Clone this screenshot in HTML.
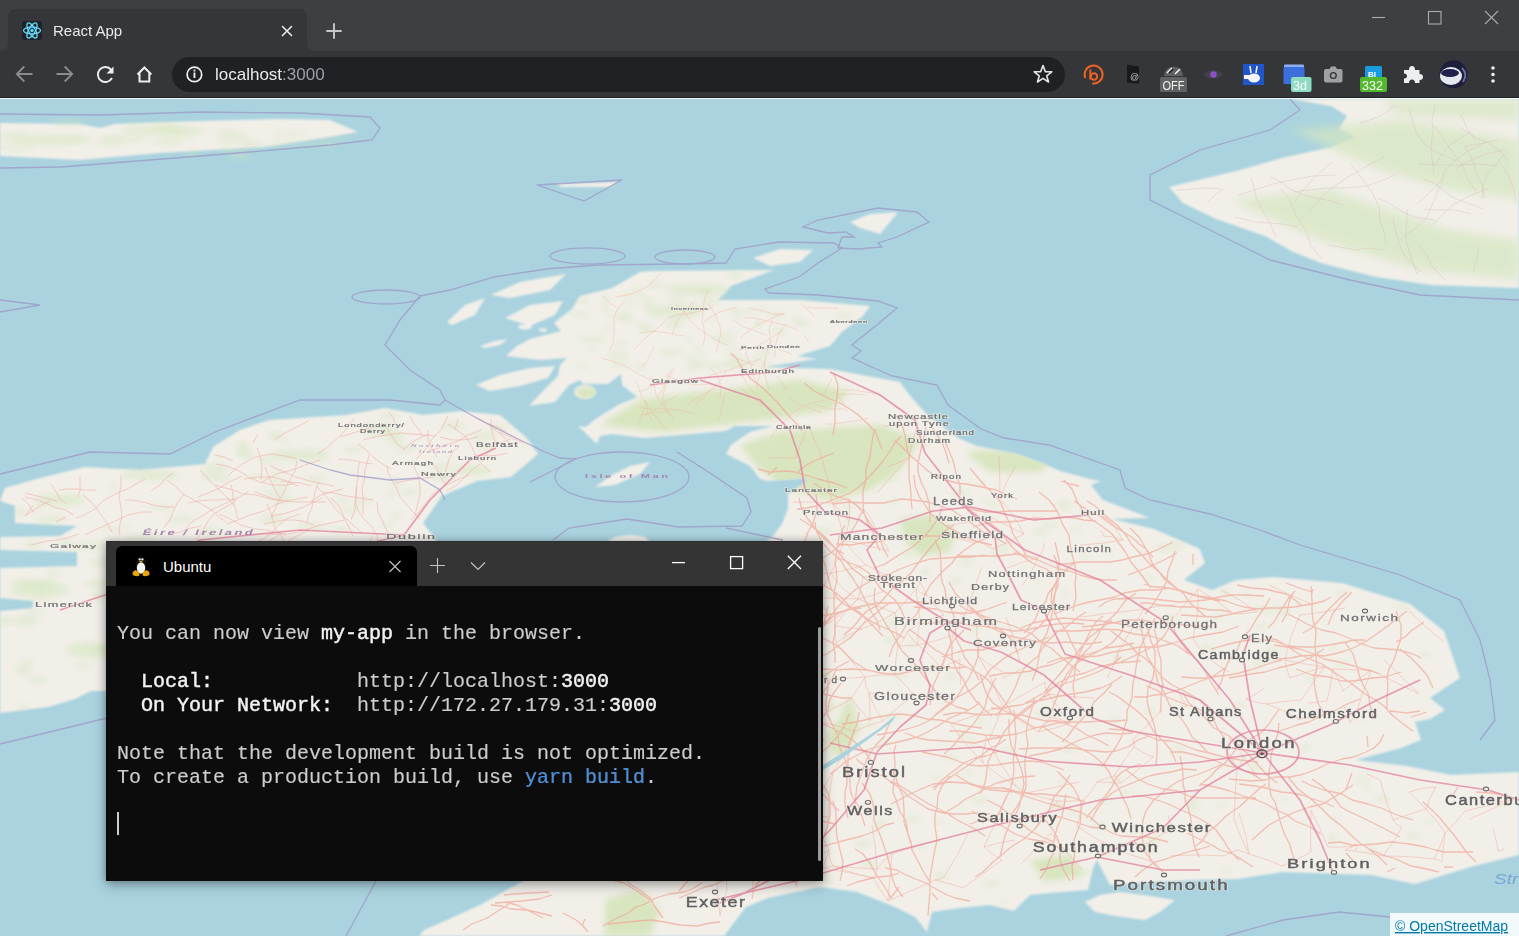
<!DOCTYPE html>
<html><head><meta charset="utf-8">
<style>
html,body{margin:0;padding:0;width:1519px;height:936px;overflow:hidden;background:#aad3df;font-family:"Liberation Sans",sans-serif;}
.abs{position:absolute;}
#frame{position:absolute;left:0;top:0;width:1519px;height:51px;background:#3c4043;}
#toolbar{position:absolute;left:0;top:51px;width:1519px;height:46px;background:#35363a;}
#tbline{position:absolute;left:0;top:97px;width:1519px;height:1px;background:#1e2021;}
#wline{position:absolute;left:0;top:98px;width:1519px;height:1px;background:#f4fbfd;}
#tab{position:absolute;left:8px;top:9px;width:299px;height:41px;background:#35363a;border-radius:8px 8px 0 0;}
#omni{position:absolute;left:172px;top:57px;width:893px;height:35px;background:#202124;border-radius:18px;}
#map{position:absolute;left:0;top:98px;width:1519px;height:838px;}
#term{position:absolute;left:106px;top:541px;width:717px;height:340px;background:#0c0c0c;box-shadow:0 0 8px rgba(0,0,0,.28),0 5px 12px rgba(0,0,0,.25);}
#ttitle{position:absolute;left:0;top:0;width:717px;height:45px;background:#343434;border-top:1px solid #2c2c2c;box-sizing:border-box;}
#ttab{position:absolute;left:10px;top:5px;width:301px;height:40px;background:#000;border-radius:6px 6px 0 0;}
.tl{position:absolute;left:11px;font:20px/24px "Liberation Mono",monospace;color:#cccccc;white-space:pre;-webkit-text-stroke:0.15px #cccccc;}
.b{font-weight:normal;color:#f2f2f2;-webkit-text-stroke:0.45px #f2f2f2;}
.lbl{font-family:"Liberation Sans",sans-serif;fill:#555;}
</style></head><body>

<div id="map">
<svg width="1519" height="838" viewBox="0 98 1519 838">
<defs>
<filter id="bl" x="-5%" y="-5%" width="110%" height="110%"><feGaussianBlur stdDeviation="1.1"/></filter>
<filter id="bl3" x="-10%" y="-10%" width="120%" height="120%"><feGaussianBlur stdDeviation="3"/></filter>
<filter id="bl5" x="-10%" y="-10%" width="120%" height="120%"><feGaussianBlur stdDeviation="5"/></filter>
<filter id="lblur" x="-5%" y="-20%" width="110%" height="140%"><feGaussianBlur stdDeviation="0.45"/></filter>
<clipPath id="landclip">

<path d="M0,123 L80,124 L100,128 L115,124 L200,121 L280,119 L330,120 L358,132 L330,137 L265,147 L160,153 L80,160 L0,156 Z"/>

<path d="M556,184 L618,182 L610,187 L562,187 Z"/>

<path d="M1290,99 L1519,99 L1519,288 L1431,285 L1376,277 L1321,263 L1293,252 L1265,236 L1216,219 L1183,203 L1169,187 L1240,170 L1282,158 L1331,147 L1356,137 L1339,129 L1347,116 L1331,106 Z"/>

<path d="M850,222 L870,214 L898,212 L890,222 L880,234 L860,228 Z"/>

<path d="M753,258 L780,249 L813,250 L800,262 L770,266 Z"/>

<path d="M491,295 L520,282 L566,274 L550,290 L510,298 Z"/>
<path d="M447,322 L465,305 L485,298 L475,315 L452,325 Z"/>
<path d="M505,318 L530,305 L563,301 L555,315 L530,326 Z"/>
<path d="M476,385 L500,375 L530,368 L555,366 L548,378 L520,386 L490,391 Z"/>
<ellipse cx="585" cy="392" rx="11" ry="7"/>
<path d="M595,487 L612,475 L630,466 L650,462 L640,474 L615,485 Z"/>

<path d="M1085,902 L1100,895 L1120,892 L1150,896 L1175,900 L1160,912 L1145,920 L1115,916 L1095,912 Z"/>

<path d="M606,542 L615,537 L630,535 L645,537 L650,542 Z"/>

<path d="M480,346 L495,341 L508,339 L500,345 L485,348 Z"/>
<ellipse cx="525" cy="327" rx="7" ry="2.6"/>
<ellipse cx="543" cy="330" rx="4" ry="1.8"/>

<path d="M640,272 L652,271 L774,270 L731,286 L718,300 L731,300 L800,300 L870,306 L863,316 L842,332 L830,346 L797,356 L817,359 L797,362 L764,367 L830,369 L900,382 L908,393 L918,405 L928,415 L946,429 L958,438 L977,446 L1017,454 L1044,464 L1060,471 L1090,479 L1101,481 L1091,485 L1103,500 L1150,518 L1112,519 L1154,529 L1200,549 L1205,563 L1184,580 L1212,590 L1236,580 L1273,577 L1342,583 L1410,604 L1444,631 L1458,672 L1460,678 L1430,698 L1445,710 L1430,719 L1415,722 L1421,740 L1401,748 L1356,760 L1407,766 L1451,775 L1519,772 L1519,855 L1474,866 L1415,884 L1371,875 L1283,872 L1238,879 L1195,880 L1150,882 L1110,885 L1100,866 L1097,860 L1093,868 L1088,890 L1050,893 L1030,895 L1014,911 L990,905 L960,908 L932,912 L927,932 L915,917 L895,907 L857,892 L820,887 L768,898 L746,907 L724,936 L419,936 L424,930 L447,920 L482,904 L503,892 L523,881 L520,700 L767,541 L773,536 L782,524 L788,508 L788,494 L806,482 L806,478 L767,481 L760,479 L750,466 L726,454 L731,445 L750,432 L773,426 L734,426 L726,431 L691,434 L645,438 L611,434 L600,436 L597,444 L578,426 L586,427 L594,420 L618,405 L637,397 L622,385 L621,374 L608,384 L583,384 L580,380 L569,385 L555,402 L529,406 L542,392 L558,376 L560,365 L567,358 L540,360 L506,356 L517,346 L530,339 L561,331 L554,323 L572,309 L580,296 L612,288 Z"/>

<path d="M5,488 L40,478 L85,467 L140,470 L205,464 L213,447 L240,430 L269,420 L346,415 L385,408 L423,415 L461,411 L500,415 L527,438 L538,454 L511,477 L477,481 L442,496 L423,523 L435,538 L440,560 L300,700 L107,691 L91,691 L75,699 L48,707 L0,713 L0,611 L33,608 L33,601 L0,598 L0,568 L77,566 L77,552 L0,550 L0,537 L60,536 L77,526 L15,523 L15,506 L0,501 Z"/>
</clipPath>
<filter id="rblur" x="0" y="0" width="100%" height="100%"><feGaussianBlur stdDeviation="0.5"/></filter>
</defs>
<rect x="0" y="98" width="1519" height="838" fill="#aad3df"/>
<g fill="#f2efe9" filter="url(#bl)">
<!-- Iceland -->
<path d="M0,123 L80,124 L100,128 L115,124 L200,121 L280,119 L330,120 L358,132 L330,137 L265,147 L160,153 L80,160 L0,156 Z"/>
<!-- Faroe -->
<path d="M556,184 L618,182 L610,187 L562,187 Z"/>
<!-- Norway -->
<path d="M1290,99 L1519,99 L1519,288 L1431,285 L1376,277 L1321,263 L1293,252 L1265,236 L1216,219 L1183,203 L1169,187 L1240,170 L1282,158 L1331,147 L1356,137 L1339,129 L1347,116 L1331,106 Z"/>
<!-- Shetland -->
<path d="M850,222 L870,214 L898,212 L890,222 L880,234 L860,228 Z"/>
<!-- Orkney -->
<path d="M753,258 L780,249 L813,250 L800,262 L770,266 Z"/>
<!-- Lewis, Uist, Skye, Mull, Arran, IoM -->
<path d="M491,295 L520,282 L566,274 L550,290 L510,298 Z"/>
<path d="M447,322 L465,305 L485,298 L475,315 L452,325 Z"/>
<path d="M505,318 L530,305 L563,301 L555,315 L530,326 Z"/>
<path d="M476,385 L500,375 L530,368 L555,366 L548,378 L520,386 L490,391 Z"/>
<ellipse cx="585" cy="392" rx="11" ry="7"/>
<path d="M595,487 L612,475 L630,466 L650,462 L640,474 L615,485 Z"/>
<!-- Isle of Wight -->
<path d="M1085,902 L1100,895 L1120,892 L1150,896 L1175,900 L1160,912 L1145,920 L1115,916 L1095,912 Z"/>
<!-- Anglesey -->
<path d="M606,542 L615,537 L630,535 L645,537 L650,542 Z"/>
<!-- Tiree etc -->
<path d="M480,346 L495,341 L508,339 L500,345 L485,348 Z"/>
<ellipse cx="525" cy="327" rx="7" ry="2.6"/>
<ellipse cx="543" cy="330" rx="4" ry="1.8"/>
<!-- Great Britain -->
<path d="M640,272 L652,271 L774,270 L731,286 L718,300 L731,300 L800,300 L870,306 L863,316 L842,332 L830,346 L797,356 L817,359 L797,362 L764,367 L830,369 L900,382 L908,393 L918,405 L928,415 L946,429 L958,438 L977,446 L1017,454 L1044,464 L1060,471 L1090,479 L1101,481 L1091,485 L1103,500 L1150,518 L1112,519 L1154,529 L1200,549 L1205,563 L1184,580 L1212,590 L1236,580 L1273,577 L1342,583 L1410,604 L1444,631 L1458,672 L1460,678 L1430,698 L1445,710 L1430,719 L1415,722 L1421,740 L1401,748 L1356,760 L1407,766 L1451,775 L1519,772 L1519,855 L1474,866 L1415,884 L1371,875 L1283,872 L1238,879 L1195,880 L1150,882 L1110,885 L1100,866 L1097,860 L1093,868 L1088,890 L1050,893 L1030,895 L1014,911 L990,905 L960,908 L932,912 L927,932 L915,917 L895,907 L857,892 L820,887 L768,898 L746,907 L724,936 L419,936 L424,930 L447,920 L482,904 L503,892 L523,881 L520,700 L767,541 L773,536 L782,524 L788,508 L788,494 L806,482 L806,478 L767,481 L760,479 L750,466 L726,454 L731,445 L750,432 L773,426 L734,426 L726,431 L691,434 L645,438 L611,434 L600,436 L597,444 L578,426 L586,427 L594,420 L618,405 L637,397 L622,385 L621,374 L608,384 L583,384 L580,380 L569,385 L555,402 L529,406 L542,392 L558,376 L560,365 L567,358 L540,360 L506,356 L517,346 L530,339 L561,331 L554,323 L572,309 L580,296 L612,288 Z"/>
<!-- Ireland -->
<path d="M5,488 L40,478 L85,467 L140,470 L205,464 L213,447 L240,430 L269,420 L346,415 L385,408 L423,415 L461,411 L500,415 L527,438 L538,454 L511,477 L477,481 L442,496 L423,523 L435,538 L440,560 L300,700 L107,691 L91,691 L75,699 L48,707 L0,713 L0,611 L33,608 L33,601 L0,598 L0,568 L77,566 L77,552 L0,550 L0,537 L60,536 L77,526 L15,523 L15,506 L0,501 Z"/>
</g>
<g clip-path="url(#landclip)"><g fill="#cfe2b0" opacity="0.75" filter="url(#bl3)">
<path d="M600,425 L640,400 L700,392 L760,385 L800,380 L850,392 L830,410 L780,418 L720,425 L660,432 Z" />
<path d="M740,445 L780,432 L830,428 L880,425 L920,440 L900,470 L870,490 L830,500 L790,490 L760,470 Z" />
<path d="M900,520 L930,515 L955,530 L950,552 L920,556 L905,540 Z" />
<path d="M965,452 L1010,450 L1050,462 L1040,472 L990,472 Z" />
<path d="M605,900 L640,890 L660,910 L650,936 L605,936 Z" />
<path d="M1030,860 L1070,855 L1085,875 L1045,882 Z" />
<path d="M825,740 L850,700 L860,730 L840,760 Z" />
<path d="M575,388 L596,386 L598,398 L578,399 Z" />
</g></g>
<g fill="#d4e6bf" opacity="0.7" filter="url(#bl5)">
<path d="M1290,130 L1400,120 L1519,140 L1519,200 L1450,190 L1380,170 Z" />
<path d="M1230,200 L1330,190 L1450,230 L1519,240 L1519,280 L1420,270 L1320,240 Z" />
<path d="M1380,100 L1519,100 L1519,120 L1400,115 Z" />
</g>
<g fill="#d3e5bd" opacity="0.55" filter="url(#bl3)">
<ellipse cx="671" cy="287" rx="9" ry="1.6"/>
<ellipse cx="733" cy="309" rx="4" ry="2.3"/>
<ellipse cx="586" cy="315" rx="5" ry="1.6"/>
<ellipse cx="700" cy="355" rx="5" ry="1.8"/>
<ellipse cx="745" cy="312" rx="12" ry="1.6"/>
<ellipse cx="666" cy="354" rx="5" ry="2.4"/>
<ellipse cx="763" cy="309" rx="8" ry="1.6"/>
<ellipse cx="776" cy="315" rx="7" ry="2.4"/>
<ellipse cx="709" cy="302" rx="10" ry="2.5"/>
<ellipse cx="647" cy="329" rx="8" ry="2.8"/>
<ellipse cx="698" cy="348" rx="5" ry="2.2"/>
<ellipse cx="587" cy="339" rx="10" ry="2.4"/>
<ellipse cx="780" cy="331" rx="9" ry="2.2"/>
<ellipse cx="715" cy="338" rx="4" ry="2.6"/>
<ellipse cx="766" cy="371" rx="11" ry="1.9"/>
<ellipse cx="689" cy="339" rx="4" ry="2.2"/>
<ellipse cx="592" cy="349" rx="5" ry="1.9"/>
<ellipse cx="690" cy="359" rx="5" ry="2.2"/>
<ellipse cx="737" cy="360" rx="11" ry="2.8"/>
<ellipse cx="657" cy="314" rx="7" ry="2.8"/>
<ellipse cx="627" cy="295" rx="6" ry="2.2"/>
<ellipse cx="576" cy="314" rx="7" ry="2.3"/>
<ellipse cx="727" cy="334" rx="9" ry="1.6"/>
<ellipse cx="691" cy="312" rx="5" ry="2.5"/>
<ellipse cx="637" cy="288" rx="7" ry="1.6"/>
<ellipse cx="605" cy="308" rx="4" ry="2.8"/>
<ellipse cx="649" cy="307" rx="7" ry="1.7"/>
<ellipse cx="712" cy="320" rx="5" ry="1.7"/>
<ellipse cx="676" cy="298" rx="11" ry="1.7"/>
<ellipse cx="582" cy="367" rx="8" ry="1.7"/>
<ellipse cx="735" cy="275" rx="8" ry="3.0"/>
<ellipse cx="652" cy="309" rx="5" ry="2.7"/>
<ellipse cx="732" cy="350" rx="7" ry="1.8"/>
<ellipse cx="642" cy="324" rx="7" ry="1.5"/>
<ellipse cx="583" cy="300" rx="6" ry="2.5"/>
<ellipse cx="640" cy="295" rx="6" ry="1.8"/>
<ellipse cx="759" cy="362" rx="11" ry="2.2"/>
<ellipse cx="768" cy="352" rx="5" ry="2.5"/>
<ellipse cx="796" cy="320" rx="5" ry="2.7"/>
<ellipse cx="673" cy="352" rx="12" ry="2.1"/>
<ellipse cx="693" cy="367" rx="10" ry="1.8"/>
<ellipse cx="618" cy="355" rx="12" ry="2.5"/>
<ellipse cx="678" cy="327" rx="5" ry="1.5"/>
<ellipse cx="730" cy="365" rx="7" ry="2.8"/>
<ellipse cx="649" cy="301" rx="6" ry="2.4"/>
<ellipse cx="652" cy="314" rx="5" ry="2.9"/>
<ellipse cx="679" cy="318" rx="9" ry="2.9"/>
<ellipse cx="699" cy="364" rx="8" ry="2.3"/>
<ellipse cx="705" cy="290" rx="4" ry="2.7"/>
<ellipse cx="626" cy="319" rx="10" ry="2.3"/>
<ellipse cx="671" cy="324" rx="8" ry="2.7"/>
<ellipse cx="606" cy="328" rx="6" ry="1.9"/>
<ellipse cx="803" cy="323" rx="8" ry="2.6"/>
<ellipse cx="844" cy="316" rx="9" ry="2.3"/>
<ellipse cx="726" cy="341" rx="8" ry="2.3"/>
<ellipse cx="716" cy="366" rx="10" ry="2.8"/>
<ellipse cx="740" cy="366" rx="11" ry="1.7"/>
<ellipse cx="611" cy="316" rx="5" ry="1.9"/>
<ellipse cx="597" cy="339" rx="10" ry="2.8"/>
<ellipse cx="621" cy="344" rx="9" ry="1.7"/>
<ellipse cx="640" cy="367" rx="7" ry="2.2"/>
<ellipse cx="623" cy="315" rx="8" ry="2.0"/>
<ellipse cx="633" cy="304" rx="10" ry="1.5"/>
<ellipse cx="738" cy="316" rx="4" ry="2.0"/>
<ellipse cx="759" cy="323" rx="5" ry="3.0"/>
<ellipse cx="606" cy="299" rx="4" ry="2.7"/>
<ellipse cx="655" cy="285" rx="7" ry="2.9"/>
<ellipse cx="619" cy="364" rx="9" ry="2.6"/>
<ellipse cx="778" cy="315" rx="5" ry="2.9"/>
<ellipse cx="762" cy="352" rx="5" ry="2.8"/>
<ellipse cx="245" cy="454" rx="10" ry="3.4"/>
<ellipse cx="285" cy="441" rx="5" ry="1.8"/>
<ellipse cx="410" cy="448" rx="9" ry="1.9"/>
<ellipse cx="396" cy="482" rx="6" ry="2.4"/>
<ellipse cx="442" cy="467" rx="9" ry="3.2"/>
<ellipse cx="212" cy="476" rx="11" ry="3.5"/>
<ellipse cx="185" cy="519" rx="11" ry="2.8"/>
<ellipse cx="219" cy="456" rx="5" ry="1.8"/>
<ellipse cx="38" cy="507" rx="7" ry="1.8"/>
<ellipse cx="46" cy="520" rx="13" ry="2.8"/>
<ellipse cx="142" cy="536" rx="14" ry="2.6"/>
<ellipse cx="132" cy="537" rx="7" ry="2.2"/>
<ellipse cx="256" cy="476" rx="6" ry="2.5"/>
<ellipse cx="316" cy="479" rx="12" ry="2.8"/>
<ellipse cx="387" cy="525" rx="8" ry="2.2"/>
<ellipse cx="391" cy="494" rx="4" ry="3.2"/>
<ellipse cx="396" cy="516" rx="5" ry="2.5"/>
<ellipse cx="272" cy="519" rx="12" ry="3.2"/>
<ellipse cx="315" cy="527" rx="11" ry="2.9"/>
<ellipse cx="57" cy="519" rx="10" ry="2.8"/>
<ellipse cx="338" cy="499" rx="9" ry="1.5"/>
<ellipse cx="272" cy="480" rx="11" ry="1.6"/>
<ellipse cx="398" cy="443" rx="5" ry="2.0"/>
<ellipse cx="394" cy="437" rx="11" ry="3.5"/>
<ellipse cx="267" cy="460" rx="9" ry="2.9"/>
<ellipse cx="414" cy="491" rx="10" ry="1.7"/>
<ellipse cx="401" cy="450" rx="10" ry="1.5"/>
<ellipse cx="363" cy="501" rx="11" ry="2.1"/>
<ellipse cx="279" cy="471" rx="9" ry="1.7"/>
<ellipse cx="483" cy="436" rx="14" ry="3.4"/>
<ellipse cx="243" cy="445" rx="6" ry="3.4"/>
<ellipse cx="114" cy="486" rx="5" ry="2.5"/>
<ellipse cx="443" cy="477" rx="13" ry="2.9"/>
<ellipse cx="125" cy="528" rx="9" ry="1.5"/>
<ellipse cx="243" cy="450" rx="5" ry="2.2"/>
<ellipse cx="171" cy="520" rx="4" ry="3.0"/>
<ellipse cx="453" cy="426" rx="13" ry="2.9"/>
<ellipse cx="487" cy="448" rx="8" ry="2.3"/>
<ellipse cx="55" cy="519" rx="7" ry="3.4"/>
<ellipse cx="276" cy="435" rx="8" ry="3.4"/>
<ellipse cx="341" cy="530" rx="13" ry="2.6"/>
<ellipse cx="389" cy="416" rx="11" ry="2.4"/>
<ellipse cx="406" cy="494" rx="7" ry="1.6"/>
<ellipse cx="500" cy="427" rx="9" ry="2.2"/>
<ellipse cx="161" cy="507" rx="14" ry="2.0"/>
<ellipse cx="354" cy="449" rx="10" ry="2.3"/>
<ellipse cx="112" cy="529" rx="9" ry="1.9"/>
<ellipse cx="308" cy="526" rx="11" ry="2.3"/>
<ellipse cx="223" cy="479" rx="8" ry="2.2"/>
<ellipse cx="272" cy="492" rx="13" ry="1.9"/>
<ellipse cx="216" cy="468" rx="14" ry="3.2"/>
<ellipse cx="484" cy="472" rx="10" ry="1.5"/>
<ellipse cx="211" cy="531" rx="12" ry="3.2"/>
<ellipse cx="525" cy="443" rx="5" ry="1.8"/>
<ellipse cx="282" cy="499" rx="13" ry="2.9"/>
<ellipse cx="350" cy="510" rx="9" ry="2.6"/>
<ellipse cx="21" cy="512" rx="6" ry="3.3"/>
<ellipse cx="349" cy="450" rx="5" ry="2.0"/>
<ellipse cx="344" cy="502" rx="5" ry="1.6"/>
<ellipse cx="283" cy="486" rx="8" ry="1.9"/>
<ellipse cx="64" cy="543" rx="8" ry="2.9"/>
<ellipse cx="102" cy="650" rx="13" ry="3.0"/>
<ellipse cx="25" cy="583" rx="14" ry="3.4"/>
<ellipse cx="33" cy="545" rx="9" ry="3.3"/>
<ellipse cx="45" cy="584" rx="11" ry="3.9"/>
<ellipse cx="36" cy="612" rx="11" ry="2.4"/>
<ellipse cx="84" cy="666" rx="10" ry="2.4"/>
<ellipse cx="103" cy="594" rx="12" ry="2.5"/>
<ellipse cx="23" cy="670" rx="8" ry="3.9"/>
<ellipse cx="53" cy="573" rx="7" ry="2.8"/>
<ellipse cx="23" cy="706" rx="6" ry="2.1"/>
<ellipse cx="99" cy="597" rx="7" ry="3.9"/>
<ellipse cx="79" cy="546" rx="11" ry="2.8"/>
<ellipse cx="40" cy="597" rx="7" ry="2.0"/>
<ellipse cx="101" cy="562" rx="14" ry="2.4"/>
<ellipse cx="38" cy="680" rx="12" ry="2.9"/>
<ellipse cx="5" cy="621" rx="8" ry="3.8"/>
<ellipse cx="95" cy="546" rx="9" ry="3.6"/>
<ellipse cx="81" cy="548" rx="5" ry="2.1"/>
<ellipse cx="98" cy="584" rx="12" ry="3.8"/>
<ellipse cx="36" cy="587" rx="14" ry="3.2"/>
<ellipse cx="28" cy="662" rx="8" ry="2.6"/>
<ellipse cx="97" cy="648" rx="13" ry="2.0"/>
<ellipse cx="25" cy="621" rx="14" ry="3.9"/>
<ellipse cx="41" cy="583" rx="9" ry="3.0"/>
<ellipse cx="1382" cy="799" rx="8" ry="2.7"/>
<ellipse cx="1246" cy="594" rx="5" ry="2.0"/>
<ellipse cx="960" cy="806" rx="4" ry="1.6"/>
<ellipse cx="847" cy="706" rx="5" ry="3.0"/>
<ellipse cx="1007" cy="472" rx="4" ry="2.2"/>
<ellipse cx="1317" cy="653" rx="4" ry="2.1"/>
<ellipse cx="1255" cy="767" rx="7" ry="2.8"/>
<ellipse cx="1218" cy="616" rx="7" ry="1.8"/>
<ellipse cx="995" cy="553" rx="4" ry="2.8"/>
<ellipse cx="1225" cy="593" rx="5" ry="3.0"/>
<ellipse cx="1176" cy="546" rx="8" ry="2.5"/>
<ellipse cx="1153" cy="840" rx="8" ry="2.9"/>
<ellipse cx="851" cy="577" rx="4" ry="1.8"/>
<ellipse cx="1426" cy="655" rx="5" ry="2.7"/>
<ellipse cx="1238" cy="740" rx="4" ry="2.1"/>
<ellipse cx="921" cy="532" rx="5" ry="2.4"/>
<ellipse cx="831" cy="594" rx="7" ry="1.8"/>
<ellipse cx="1040" cy="532" rx="8" ry="2.3"/>
<ellipse cx="867" cy="481" rx="5" ry="2.3"/>
<ellipse cx="937" cy="778" rx="5" ry="1.9"/>
<ellipse cx="1040" cy="713" rx="5" ry="2.1"/>
<ellipse cx="1076" cy="529" rx="7" ry="1.8"/>
<ellipse cx="827" cy="881" rx="6" ry="2.7"/>
<ellipse cx="833" cy="706" rx="7" ry="2.9"/>
<ellipse cx="885" cy="741" rx="5" ry="2.3"/>
<ellipse cx="925" cy="572" rx="6" ry="2.9"/>
<ellipse cx="899" cy="675" rx="8" ry="3.0"/>
<ellipse cx="960" cy="493" rx="9" ry="3.0"/>
<ellipse cx="1105" cy="853" rx="8" ry="1.8"/>
<ellipse cx="975" cy="630" rx="6" ry="2.1"/>
<ellipse cx="909" cy="554" rx="7" ry="2.8"/>
<ellipse cx="852" cy="711" rx="8" ry="1.6"/>
<ellipse cx="1240" cy="705" rx="7" ry="2.0"/>
<ellipse cx="1115" cy="721" rx="6" ry="2.5"/>
<ellipse cx="1134" cy="649" rx="3" ry="2.4"/>
<ellipse cx="1164" cy="548" rx="8" ry="2.7"/>
<ellipse cx="912" cy="645" rx="4" ry="2.2"/>
<ellipse cx="1334" cy="819" rx="6" ry="1.6"/>
<ellipse cx="1174" cy="619" rx="9" ry="1.7"/>
<ellipse cx="1333" cy="837" rx="4" ry="3.0"/>
<ellipse cx="869" cy="605" rx="8" ry="1.7"/>
<ellipse cx="968" cy="561" rx="6" ry="2.0"/>
<ellipse cx="849" cy="521" rx="4" ry="2.9"/>
<ellipse cx="940" cy="822" rx="4" ry="2.3"/>
<ellipse cx="1266" cy="610" rx="8" ry="2.3"/>
<ellipse cx="1227" cy="871" rx="4" ry="3.0"/>
<ellipse cx="1261" cy="627" rx="8" ry="1.9"/>
<ellipse cx="1074" cy="812" rx="6" ry="1.8"/>
<ellipse cx="1231" cy="762" rx="5" ry="1.5"/>
<ellipse cx="847" cy="505" rx="7" ry="2.1"/>
<ellipse cx="915" cy="544" rx="7" ry="1.5"/>
<ellipse cx="825" cy="607" rx="4" ry="2.0"/>
<ellipse cx="979" cy="722" rx="7" ry="1.8"/>
<ellipse cx="1257" cy="667" rx="4" ry="2.9"/>
<ellipse cx="993" cy="505" rx="4" ry="2.5"/>
<ellipse cx="1429" cy="821" rx="5" ry="1.9"/>
<ellipse cx="831" cy="752" rx="6" ry="2.0"/>
<ellipse cx="1272" cy="652" rx="9" ry="2.6"/>
<ellipse cx="996" cy="882" rx="3" ry="2.3"/>
<ellipse cx="1106" cy="549" rx="3" ry="2.7"/>
<ellipse cx="832" cy="705" rx="9" ry="1.7"/>
<ellipse cx="962" cy="734" rx="6" ry="2.5"/>
<ellipse cx="1038" cy="580" rx="3" ry="2.8"/>
<ellipse cx="1368" cy="788" rx="3" ry="2.8"/>
<ellipse cx="1342" cy="663" rx="7" ry="2.2"/>
<ellipse cx="980" cy="483" rx="4" ry="1.6"/>
<ellipse cx="1057" cy="805" rx="7" ry="2.8"/>
<ellipse cx="1208" cy="648" rx="8" ry="2.3"/>
<ellipse cx="1008" cy="751" rx="9" ry="1.8"/>
<ellipse cx="1004" cy="548" rx="7" ry="2.9"/>
<ellipse cx="1342" cy="593" rx="8" ry="2.0"/>
<ellipse cx="989" cy="884" rx="7" ry="2.5"/>
<ellipse cx="1150" cy="850" rx="7" ry="2.8"/>
<ellipse cx="1127" cy="792" rx="6" ry="2.0"/>
<ellipse cx="971" cy="741" rx="3" ry="2.9"/>
<ellipse cx="924" cy="443" rx="4" ry="2.9"/>
<ellipse cx="1063" cy="501" rx="3" ry="1.6"/>
<ellipse cx="1305" cy="747" rx="7" ry="2.6"/>
<ellipse cx="869" cy="725" rx="5" ry="2.7"/>
<ellipse cx="869" cy="864" rx="8" ry="2.9"/>
<ellipse cx="898" cy="533" rx="4" ry="1.6"/>
<ellipse cx="1413" cy="836" rx="7" ry="2.7"/>
<ellipse cx="893" cy="479" rx="8" ry="1.8"/>
<ellipse cx="1045" cy="642" rx="3" ry="1.9"/>
<ellipse cx="1020" cy="788" rx="5" ry="2.0"/>
<ellipse cx="845" cy="636" rx="6" ry="2.7"/>
<ellipse cx="1064" cy="782" rx="6" ry="1.8"/>
<ellipse cx="824" cy="531" rx="8" ry="3.0"/>
<ellipse cx="826" cy="675" rx="6" ry="2.7"/>
<ellipse cx="951" cy="677" rx="5" ry="2.7"/>
<ellipse cx="1004" cy="902" rx="5" ry="1.8"/>
<ellipse cx="1310" cy="679" rx="4" ry="2.5"/>
<ellipse cx="879" cy="824" rx="7" ry="2.7"/>
<ellipse cx="1260" cy="608" rx="5" ry="2.1"/>
<ellipse cx="966" cy="562" rx="8" ry="2.3"/>
<ellipse cx="1087" cy="872" rx="4" ry="2.2"/>
<ellipse cx="1193" cy="807" rx="8" ry="2.5"/>
<ellipse cx="1066" cy="593" rx="4" ry="2.8"/>
<ellipse cx="1284" cy="801" rx="4" ry="2.2"/>
<ellipse cx="1361" cy="720" rx="4" ry="2.2"/>
<ellipse cx="956" cy="581" rx="7" ry="2.8"/>
<ellipse cx="931" cy="508" rx="4" ry="2.0"/>
<ellipse cx="1051" cy="525" rx="9" ry="2.6"/>
<ellipse cx="894" cy="622" rx="9" ry="2.7"/>
<ellipse cx="1333" cy="647" rx="4" ry="2.5"/>
<ellipse cx="897" cy="533" rx="5" ry="1.6"/>
<ellipse cx="1101" cy="826" rx="7" ry="2.3"/>
<ellipse cx="1263" cy="662" rx="4" ry="2.4"/>
<ellipse cx="1105" cy="800" rx="8" ry="2.1"/>
<ellipse cx="1222" cy="805" rx="6" ry="1.8"/>
<ellipse cx="1362" cy="780" rx="8" ry="2.5"/>
<ellipse cx="1270" cy="657" rx="5" ry="2.4"/>
<ellipse cx="891" cy="640" rx="8" ry="2.6"/>
<ellipse cx="1118" cy="658" rx="7" ry="2.1"/>
<ellipse cx="950" cy="757" rx="8" ry="2.1"/>
<ellipse cx="850" cy="702" rx="4" ry="2.7"/>
<ellipse cx="893" cy="717" rx="6" ry="2.6"/>
<ellipse cx="1179" cy="750" rx="8" ry="2.3"/>
<ellipse cx="969" cy="772" rx="5" ry="2.6"/>
<ellipse cx="1014" cy="630" rx="3" ry="2.1"/>
<ellipse cx="1116" cy="779" rx="5" ry="1.9"/>
<ellipse cx="979" cy="801" rx="9" ry="2.3"/>
<ellipse cx="975" cy="831" rx="5" ry="1.8"/>
<ellipse cx="913" cy="818" rx="8" ry="2.5"/>
<ellipse cx="1150" cy="711" rx="4" ry="2.9"/>
<ellipse cx="1069" cy="749" rx="8" ry="2.7"/>
<ellipse cx="1149" cy="577" rx="6" ry="1.7"/>
<ellipse cx="1403" cy="607" rx="8" ry="1.9"/>
<ellipse cx="1085" cy="557" rx="6" ry="1.8"/>
<ellipse cx="825" cy="791" rx="5" ry="1.9"/>
<ellipse cx="1033" cy="670" rx="6" ry="2.5"/>
<ellipse cx="1282" cy="611" rx="9" ry="2.8"/>
<ellipse cx="863" cy="844" rx="8" ry="2.7"/>
<ellipse cx="921" cy="846" rx="7" ry="1.5"/>
<ellipse cx="894" cy="501" rx="4" ry="2.7"/>
<ellipse cx="1064" cy="506" rx="8" ry="2.7"/>
<ellipse cx="940" cy="876" rx="7" ry="2.7"/>
<ellipse cx="1371" cy="849" rx="4" ry="2.5"/>
<ellipse cx="1192" cy="801" rx="6" ry="2.8"/>
<ellipse cx="986" cy="500" rx="6" ry="1.6"/>
<ellipse cx="166" cy="127" rx="13" ry="1.7"/>
<ellipse cx="191" cy="153" rx="6" ry="2.3"/>
<ellipse cx="166" cy="142" rx="15" ry="2.3"/>
<ellipse cx="134" cy="137" rx="19" ry="1.1"/>
<ellipse cx="225" cy="145" rx="6" ry="1.9"/>
<ellipse cx="240" cy="156" rx="11" ry="2.5"/>
<ellipse cx="181" cy="139" rx="19" ry="1.1"/>
<ellipse cx="253" cy="145" rx="11" ry="2.3"/>
<ellipse cx="131" cy="139" rx="13" ry="2.2"/>
<ellipse cx="78" cy="138" rx="12" ry="1.8"/>
<ellipse cx="290" cy="133" rx="18" ry="1.6"/>
<ellipse cx="179" cy="132" rx="13" ry="2.5"/>
<ellipse cx="231" cy="151" rx="11" ry="1.5"/>
<ellipse cx="108" cy="143" rx="15" ry="2.2"/>
<ellipse cx="19" cy="148" rx="18" ry="1.8"/>
<ellipse cx="22" cy="133" rx="6" ry="1.3"/>
<ellipse cx="323" cy="144" rx="15" ry="2.2"/>
<ellipse cx="319" cy="144" rx="15" ry="1.9"/>
<ellipse cx="245" cy="143" rx="16" ry="1.3"/>
<ellipse cx="235" cy="138" rx="17" ry="1.2"/>
<ellipse cx="68" cy="123" rx="17" ry="2.4"/>
<ellipse cx="231" cy="135" rx="18" ry="2.2"/>
<ellipse cx="199" cy="131" rx="10" ry="1.6"/>
<ellipse cx="115" cy="138" rx="15" ry="2.4"/>
<ellipse cx="24" cy="142" rx="7" ry="1.2"/>
<ellipse cx="285" cy="143" rx="19" ry="1.7"/>
<ellipse cx="10" cy="136" rx="14" ry="2.4"/>
<ellipse cx="343" cy="139" rx="12" ry="1.2"/>
<ellipse cx="227" cy="130" rx="8" ry="1.0"/>
<ellipse cx="7" cy="147" rx="8" ry="2.4"/>
</g>
<g fill="#d6e7c2" opacity="0.6" filter="url(#bl3)">
<ellipse cx="60" cy="500" rx="25" ry="6"/>
<ellipse cx="150" cy="475" rx="30" ry="5"/>
<ellipse cx="40" cy="590" rx="30" ry="8"/>
<ellipse cx="90" cy="650" rx="25" ry="8"/>
<ellipse cx="300" cy="455" rx="30" ry="6"/>
<ellipse cx="380" cy="430" rx="20" ry="5"/>
<ellipse cx="470" cy="470" rx="18" ry="5"/>
<ellipse cx="700" cy="290" rx="30" ry="6"/>
<ellipse cx="680" cy="310" rx="25" ry="6"/>
<ellipse cx="50" cy="140" rx="40" ry="5"/>
<ellipse cx="160" cy="130" rx="40" ry="5"/>
</g>
<g filter="url(#rblur)">
<path d="M772,869 L783,876 L796,883 M1312,779 L1322,786 L1332,795 L1341,807 L1348,811 L1363,818 L1375,824 L1385,829 L1400,837 M1384,734 L1380,742 L1374,748 L1366,752 L1354,757 L1342,759 L1327,764 L1317,769 L1304,774 L1290,777 L1275,777 L1265,780 L1251,781 L1241,780 L1229,779 M1070,775 L1064,786 L1054,797 L1049,810 L1041,821 L1035,829 L1024,839 L1011,847 L1004,853 L993,862 L983,872 L975,877 M1197,770 L1183,769 L1171,772 L1158,774 L1149,776 L1137,781 L1122,787 L1112,793 L1104,800 L1096,811 L1091,821 M994,822 L1001,809 L1004,802 L1010,790 L1013,779 L1014,768 L1013,761 L1015,748 L1016,737 L1015,724 L1014,710 M1328,843 L1340,842 L1352,845 L1360,845 L1376,844 L1392,842 L1409,844 L1426,847 L1435,850 L1445,852 L1463,852 L1473,852 M1396,611 L1401,625 L1401,632 L1401,639 L1398,647 L1394,660 L1389,669 L1387,678 L1388,686 L1387,698 L1387,710 M1086,612 L1078,617 L1071,623 L1065,628 L1057,632 L1046,643 L1038,656 L1026,666 L1020,675 L1015,688 L1009,699 L1004,707 L996,716 M882,449 L879,442 L876,433 L868,424 L857,414 L850,409 L840,403 L828,398 L814,391 L804,383 M1054,555 L1057,563 L1058,571 L1057,580 L1054,586 L1048,594 L1046,601 L1039,610 L1035,620 L1029,627 L1024,633 M848,818 L845,805 L845,792 L847,784 L847,772 L848,764 L848,757 L849,746 L853,733 L857,724 L859,712 M1035,814 L1046,821 L1051,827 L1057,837 L1060,846 L1060,860 L1063,869 L1070,881 M1411,717 L1427,712 M1134,697 L1145,697 L1155,695 L1164,694 L1178,690 L1186,687 L1198,682 L1212,677 L1225,668 M801,675 L791,676 L778,676 L767,678 L754,678 L737,680 L723,685 L710,688 L701,690 L692,689 L680,690 L665,688 M1390,711 L1407,713 L1420,711 M904,638 L896,633 L887,629 L878,625 L867,619 L859,612 L844,604 L838,599 L831,588 L828,577 L825,564 L821,557 L816,552 M894,440 L901,446 L912,457 L919,463 L928,471 L936,476 L946,480 L957,483 L966,484 L982,487 L996,490 L1005,494 L1017,499 M1149,736 L1138,740 L1128,747 L1116,751 L1106,752 L1095,751 L1084,750 L1074,748 L1065,748 L1051,748 L1036,748 L1019,749 M990,814 L975,813 L965,814 L954,814 L944,813 L928,809 L919,803 L908,796 L900,788 L890,782 M823,859 L821,869 L820,881 M1155,618 L1151,627 L1144,639 L1140,648 L1137,661 L1135,675 L1133,683 L1132,698 L1127,711 L1127,720 L1124,729 L1121,738 L1116,747 L1108,758 L1102,767 M733,769 L720,771 L709,775 L697,780 L681,786 L668,788 L654,790 L643,789 M1134,841 L1139,847 L1146,853 L1152,861 L1163,872 M1217,690 L1221,683 L1224,672 L1228,662 L1236,653 L1240,643 L1245,635 L1250,630 L1257,618 L1265,607 L1270,598 M1153,557 L1146,549 L1139,544 L1133,538 L1125,533 L1112,525 L1100,516 L1092,513 L1083,507 L1074,501 M839,558 L850,563 L858,566 L869,573 L876,582 L881,589 L894,599 L900,607 L905,619 M949,731 L958,731 L973,733 L985,735 L1000,736 L1017,734 L1026,731 L1034,728 L1046,726 L1057,723 L1068,722 L1086,722 L1103,721 L1116,721 L1127,720 M1057,564 L1066,564 L1080,562 L1094,562 L1110,562 L1122,560 L1133,557 L1147,554 L1159,549 L1173,542 M1138,629 L1129,626 L1116,623 L1100,621 L1085,620 L1074,619 L1064,618 L1048,620 L1033,623 L1021,628 M996,678 L992,685 L987,697 L985,707 L979,716 L972,726 L960,737 L954,745 L944,754 M1276,659 L1291,658 L1300,656 L1316,655 L1324,656 L1334,654 L1345,651 L1353,648 L1365,642 L1378,633 L1389,625 L1398,618 L1407,611 M735,861 L727,851 L718,845 L710,838 L704,829 L698,815 L695,807 L693,798 M979,680 L973,668 L965,658 L960,646 L956,639 L955,625 L954,617 L950,605 L946,597 L945,589 L942,582 L941,574 L941,563 L940,551 L935,540 M809,751 L808,743 L807,734 L809,723 L812,715 L817,704 L823,692 L828,686 L833,677 L836,670 M930,522 L930,514 L929,503 L926,492 L921,482 L918,472 L918,463 L920,454 L923,440 L926,427 M775,568 L768,562 L763,557 M1205,616 L1197,609 L1189,602 L1184,594 L1174,586 L1163,576 L1153,565 L1149,555 L1145,547 L1139,537 L1130,528 M733,647 L743,657 L750,669 L756,677 L761,687 L766,695 L773,705 L778,719 L783,727 L790,736 L796,743 L805,749 L819,758 M1444,867 L1453,867 M943,715 L953,713 L966,713 L983,715 L999,714 L1008,714 L1022,715 L1033,718 L1046,721 L1057,721 L1066,724 L1076,728 L1087,735 L1100,741 L1109,746 M1075,699 L1073,687 L1074,680 L1075,669 L1079,655 L1085,642 L1090,632 L1096,622 L1103,616 M1006,739 L999,744 L991,748 L979,757 L967,766 L954,775 L941,784 L932,787 M1311,596 L1313,589 M1476,792 L1490,793 L1499,794 L1513,800 M1066,852 L1056,846 L1046,842 L1029,839 L1015,834 L1004,827 L988,820 L979,815 L972,811 M1208,753 L1199,743 L1192,737 L1187,727 L1180,717 L1174,711 L1169,704 L1164,692 L1158,683 L1156,674 L1152,664 L1147,656 L1144,644 L1142,632 L1138,623 M992,716 L986,711 L976,701 L968,690 L963,679 L957,671 L952,658 L952,646 L949,634 L949,623 M1220,601 L1205,598 L1189,594 L1177,589 L1165,580 L1160,573 L1149,563 L1142,555 L1132,545 L1126,535 L1117,525 L1107,517 L1095,506 L1087,501 M949,602 L932,603 L920,602 L903,603 L887,603 L877,603 L868,605 L852,608 L839,613 L831,618 L825,624 L821,631 L814,640 L808,645 M922,752 L931,754 L947,757 L958,761 L969,765 L981,766 L996,765 L1009,763 L1020,762 L1028,761 L1042,762 L1050,765 L1064,770 M970,468 L979,479 L986,487 L996,496 L1001,503 L1005,514 L1010,524 L1013,534 L1020,545 L1026,555 M1279,709 L1275,715 L1268,725 L1261,733 L1252,738 L1244,742 L1237,747 L1231,756 L1225,763 L1216,770 L1211,776 L1199,786 M833,435 L835,422 L835,408 L837,398 L838,385 L834,374 M987,538 L975,543 L966,549 L957,556 L952,563 L942,572 L931,584 L925,594 L921,607 L916,615 L906,625 L901,634 L893,646 L889,657 M1189,654 L1178,646 L1163,640 L1151,636 L1134,634 L1119,630 L1101,629 L1090,630 L1078,631 L1065,631 L1053,631 M1226,763 L1218,766 L1204,772 L1196,775 L1186,778 L1177,782 L1164,791 L1153,801 L1146,811 L1143,820 L1142,832 L1143,845 L1145,852 M990,676 L1006,673 L1016,673 L1031,671 L1041,667 L1051,665 L1066,659 L1076,657 L1085,655 L1095,652 L1106,648 L1122,646 L1134,643 M1142,618 L1148,630 L1151,641 L1155,651 L1155,664 L1153,678 L1148,689 L1147,701 L1150,713 L1154,724 L1156,734 L1157,744 L1157,754 L1156,765 M980,702 L974,707 L965,712 L950,718 L938,726 L924,734 L914,738 L898,742 L884,745 L867,750 L854,757 L845,762 L837,769 L830,774 M1476,862 L1468,854 L1462,846 L1454,835 L1447,827 L1440,818 L1431,809 L1423,802 M1257,609 L1244,607 L1234,604 L1226,601 L1212,598 L1199,596 L1189,593 L1177,590 L1164,587 L1154,587 L1144,584 M1288,614 L1298,619 L1307,624 L1322,630 L1336,633 L1351,639 L1359,643 L1374,648 L1387,649 L1399,650 L1413,654 L1421,658 M1274,645 L1287,647 L1300,649 L1314,654 L1324,659 L1339,662 L1354,666 L1363,669 L1371,671 L1380,674 M772,809 L764,804 L749,798 L735,791 L728,786 L721,781 L713,775 L698,767 M852,698 L842,698 L828,695 L816,693 L805,693 L789,691 L778,688 L770,686 L758,684 M1080,672 L1072,666 L1061,657 L1051,648 L1043,644 L1032,634 L1023,630 L1014,626 L997,621 L986,617 L977,613 L967,610 L959,605 M812,874 L816,860 L820,848 L824,836 L827,828 L830,815 L830,801 L828,793 L821,782 L819,772 L818,763 L820,751 L820,744 L820,737 L823,728 M891,720 L887,729 L884,737 L875,746 L867,759 L864,767 L860,778 L857,786 L856,794 L855,804 M732,602 L727,588 L724,579 M776,670 L783,661 L793,651 L804,645 L815,637 L819,631 L823,624 L826,616 L828,606 M970,608 L980,617 L990,627 L998,631 L1006,635 L1019,638 L1034,641 L1051,643 L1066,642 L1078,643 L1087,644 L1102,642 M914,475 L915,486 L919,496 L925,505 L931,514 L939,521 L946,526 L961,534 L975,541 L992,545 M1100,828 L1090,827 L1073,821 L1060,817 L1046,816 L1031,817 L1021,819 L1007,820 L991,819 L979,821 L970,824 M949,463 L945,450 L941,440 L935,433 L930,422 M815,522 L816,530 L822,542 L830,551 L836,556 L842,562 L845,568 L852,577 L860,590 L866,602 L872,613 L877,621 L880,630 M743,661 L747,648 L753,635 L757,621 L762,608 L763,593 L765,585 L769,577 L772,567 L773,556 M1282,622 L1287,613 L1289,602 L1293,593 M791,839 L781,844 L772,850 L759,856 L751,860 L740,869 L730,877 L722,881 L714,885 L705,887 L689,894 L679,898 M855,849 L863,854 L870,863 L874,871 L878,877 L886,889 L891,898 M1211,649 L1225,645 L1242,641 L1251,640 L1264,640 L1273,641 L1289,646 L1301,647 L1314,647 L1329,645 L1346,642 L1354,640 L1365,640 M842,724 L856,722 L873,718 L889,715 L901,714 L916,716 L927,719 L940,720 L956,724 L966,726 L982,728 M833,801 L836,812 L836,825 L837,837 L840,850 L843,862 L842,872 L840,881 M1111,631 L1119,637 L1130,645 L1137,653 L1146,659 L1154,667 L1163,678 L1172,685 L1184,691 L1193,696 L1202,702 L1212,713 L1215,720 M1194,847 L1201,842 L1209,831 L1216,826 L1226,816 L1239,807 L1248,799 L1259,789 L1266,784 M1303,633 L1312,628 L1319,620 L1329,609 L1338,600 L1347,592 M1346,853 L1356,864 M1277,783 L1266,774 L1258,765 L1248,754 L1240,747 L1229,736 L1222,732 L1214,728 L1208,721 L1198,711 L1189,703 L1183,693 M1141,661 L1129,662 L1115,663 L1099,667 L1085,673 L1072,676 L1058,683 L1049,691 L1044,696 L1033,705 L1024,712 L1014,720 M885,868 L897,870 L904,874 L913,878 L926,883 L936,889 L945,894 L955,898 L970,901 M862,783 L870,794 L873,803 L874,810 L874,821 L878,830 L883,843 L887,855 L890,866 L892,877 L895,886 L903,897 M1266,637 L1277,640 L1287,646 L1297,653 L1307,658 L1322,664 L1335,673 L1343,678 L1352,684 L1365,694 L1374,699 L1384,706 L1393,716 L1406,726 L1413,731 M791,796 L775,797 L762,796 L745,799 L736,800 L722,803 L709,804 L698,804 M899,887 L890,899 M1324,714 L1318,703 L1315,689 L1314,679 L1317,667 L1316,657 L1315,645 L1316,631 L1313,620 L1312,612 L1312,600 L1311,586 M1082,627 L1091,626 L1105,624 L1113,623 L1126,620 L1142,620 L1151,622 L1164,623 L1176,624 L1193,626 L1210,626 M1187,833 L1199,839 L1212,845 L1220,850 L1233,854 L1241,859 L1253,867 M1126,770 L1138,779 L1148,784 L1163,789 L1177,791 L1191,797 L1200,798 L1215,798 L1229,798 L1241,798 L1256,798 M1451,798 L1458,787 M1396,642 L1405,637 L1411,631 L1424,622 M833,504 L849,502 L865,503 L876,503 L884,503 L901,499 L912,500 L928,502 L943,507 L952,510 L961,516 L970,522 L983,532 L995,537 L1006,544 M874,568 L885,564 L899,555 L911,548 L923,538 L930,530 L939,517 L943,504 M1225,739 L1218,729 L1214,721 L1209,715 L1199,709 L1190,706 L1174,700 L1164,696 L1157,690 L1146,686 M1035,776 L1022,777 L1012,779 L997,783 L988,787 L978,793 L964,800 L958,805 L946,812 M956,556 L974,556 L988,556 L999,556 L1007,555 L1017,554 L1028,557 L1038,560 L1047,564 L1059,569 L1069,571 L1080,575 L1095,579 L1105,580 L1117,580 M999,751 L986,756 L975,758 L964,763 L955,770 L948,775 L939,783 L934,790 M1061,481 L1071,484 L1079,486 M877,735 L894,732 L904,730 L920,725 L928,721 L941,711 L952,703 L959,694 L963,687 L969,678 L975,665 L978,657 L979,645 L979,638 M1085,802 L1071,797 L1060,796 L1043,794 L1034,794 L1019,792 L1005,788 L992,788 L979,786 L969,783 L956,775 M949,582 L955,593 L966,604 L976,611 L988,621 L1002,631 L1009,637 L1014,644 L1018,654 M964,630 L954,640 L947,652 L942,665 L938,675 L934,684 L931,695 L930,705 M811,586 L809,578 L808,568 L806,554 L805,541 L808,532 L813,523 L817,510 L817,503 L816,494 M1044,693 L1051,684 L1060,674 L1067,665 L1074,657 L1080,649 L1089,638 L1099,630 L1112,620 M911,844 L908,834 L906,821 L900,812 L896,800 L893,792 L894,779 L893,769 M1302,606 L1295,600 L1286,594 L1277,592 L1265,589 L1251,588 L1237,585 M1058,511 L1042,511 L1033,511 L1021,511 L1011,511 L997,512 L985,512 L970,509 M834,453 L826,456 L812,462 L805,466 L798,472 M888,557 L884,550 L879,536 L873,528 L868,520 L862,511 L856,505 L848,500 L835,496 L825,491 L814,483 M980,674 L984,687 L987,695 L993,703 L1003,710 L1011,714 L1022,720 L1035,728 M1210,846 L1200,849 L1191,851 L1181,854 L1169,858 L1155,862 L1143,870 L1135,877 M868,581 L861,575 L853,569 L844,559 L835,548 L827,539 L817,530 L808,524 L800,519 M901,436 L894,444 L890,451 L883,461 L878,467 L870,476 L860,486 L850,493 L838,498 L824,503 L816,506 L807,508 L797,509 M1239,860 L1233,854 L1228,848 L1224,841 L1216,830 L1210,825 L1202,820 L1188,813 L1179,809 L1168,804 L1160,801 L1143,796 L1132,796 M865,826 L861,814 L858,805 L852,796 L850,788 L850,779 L847,767 L845,759 L839,746 L838,735 L832,724 L826,711 L826,701 L828,688 L828,679 M1007,602 L999,605 L985,610 L971,613 L955,613 L946,612 L936,609 L925,608 L914,607 M1058,578 L1058,586 L1055,593 L1052,606 L1046,619 L1038,628 L1026,637 L1010,644 L997,646 L982,650 L967,650 L958,652 L942,657 M1003,737 L990,739 L975,743 L963,742 L946,741 L929,740 L918,738 L905,733 M787,723 L793,714 L802,705 L809,697 L816,684 L822,678 L828,673 L838,667 L849,661 M776,690 L779,678 L781,671 L784,657 L788,649 L791,643 L795,634 L804,625 L814,619 L822,616 L836,613 L851,609 L861,608 M714,755 L725,750 L735,748 L746,742 L762,738 L776,737 L789,739 L804,739 L816,741 M1193,554 L1193,565 M835,824 L826,822 L809,818 L795,816 L780,813 L766,808 L750,805 L742,801 L733,794 L725,790 L714,782 M816,657 L806,648 L801,641 L798,631 L795,623 L793,613 L787,602 L781,595 L770,585 L763,575 L757,567 L751,558 M891,602 L882,608 L874,615 L865,622 L855,633 L850,638 L838,646 L827,654 L816,658 M1054,574 L1046,569 L1032,563 L1021,555 L1013,548 L1006,539 L1001,532 L989,522 M965,667 L956,668 L940,667 L922,669 L912,671 L899,674 L890,674 L881,673 L867,670 L850,669 L837,670 L825,669 L815,669 M955,533 L940,536 L922,536 L905,536 L888,539 L878,542 L861,543 L852,545 L836,544 M802,431 L797,424 L788,415 L778,403 L767,392 L759,385 L751,379 L741,367 L737,359 L731,353 M987,800 L999,806 L1005,811 L1012,815 L1022,824 L1029,830 L1042,837 L1054,842 M1229,678 L1241,676 L1251,674 L1265,672 L1278,668 L1295,664 L1310,658 L1324,649 M873,763 L865,752 L855,742 L845,735 L830,727 L821,723 L815,717 L807,706 M822,813 L811,808 L805,803 L799,797 L792,791 L786,782 L781,774 L778,763 L771,754 L767,746 L764,737 L758,724 M1050,715 L1055,702 L1060,689 L1063,681 L1067,674 L1071,668 L1081,660 L1089,656 L1099,651 L1112,643 L1120,634 L1126,622 M1080,662 L1075,649 L1071,642 L1068,634 L1062,625 L1057,618 L1053,608 L1051,600 L1052,591 L1057,580 L1066,570 L1075,562 M1400,649 L1411,658 L1417,664 L1427,675 L1433,688 M1154,629 L1157,639 L1158,650 L1161,660 L1161,670 L1161,677 L1163,685 L1161,695 L1161,705 L1160,713 M1073,611 L1076,597 L1075,583 L1076,575 L1075,566 L1072,554 L1070,543 L1069,535 L1063,525 L1058,513 L1054,506 L1049,500 L1039,492 M930,882 L923,871 L919,863 L912,850 L911,842 L908,834 L904,822 L904,810 L903,796 L898,785 L895,775 L895,762 L894,751 L896,745 M1050,694 L1039,700 L1025,709 L1018,715 L1013,721 L1004,732 L999,742 L993,752 L988,762 L987,769 L986,778 L984,786 L980,794 M776,666 L769,671 L753,677 L739,687 L733,692 L725,697 L713,705 L703,711 L693,720 L686,732 L680,743 L677,752 L672,759 M1181,677 L1197,678 L1206,678 L1219,676 L1229,675 L1239,673 L1250,670 L1259,667 L1274,662 L1282,660 M1034,697 L1033,705 L1030,714 L1027,726 L1026,733 L1028,744 L1025,758 L1025,769 L1026,777 L1026,787 L1023,796 L1016,808 L1011,815 M1262,780 L1249,772 L1234,767 L1224,765 L1214,760 L1199,756 L1183,752 L1170,752 M847,488 L834,483 L818,479 L809,476 L795,472 L786,471 L769,472 L758,469 M991,708 L1000,709 L1012,706 L1021,705 L1030,702 L1043,700 L1055,697 L1072,694 L1085,692 L1101,688 L1110,684 L1122,676 M1297,865 L1292,853 L1290,845 L1284,833 L1280,821 L1277,809 L1275,802 L1271,796 L1269,785 L1269,771 L1271,763 L1271,755 L1275,743 L1278,733 L1279,723 M1395,868 L1387,872 M744,639 L750,645 L759,653 L766,666 L768,676 L774,688 L776,695 L779,703 L787,713 L797,721 L804,727 L817,734 L824,741 M1086,818 L1092,811 L1101,801 L1106,795 L1112,787 L1116,778 L1122,772 L1131,767 L1141,764 M1181,615 L1197,616 L1215,617 L1227,615 L1240,612 L1257,609 L1269,608 L1278,608 L1294,607 L1312,604 L1324,601 L1331,597 M777,467 L768,475 M1002,788 L1012,791 L1022,795 L1037,800 L1050,804 L1065,808 L1080,812 L1090,817 L1100,826 L1112,833 L1121,836 L1138,837 L1147,837 L1157,839 L1168,842 M912,509 L911,499 L911,492 L909,478 L909,466 L909,456 L907,448 L905,436 L902,424 L895,414 M841,683 L833,694 L829,702 L828,710 L820,722 L809,732 L798,740 L791,746 L781,752 L773,757 M766,742 L751,737 L735,733 L727,732 L716,727 L704,719 L691,710 L676,703 L668,701 L660,698 M759,742 L769,751 L780,760 L789,764 L799,772 L806,782 L812,787 L821,792 L830,802 L839,811 M1145,614 L1151,607 L1159,595 L1163,588 L1167,581 L1168,571 L1172,561 L1175,551 M1353,785 L1341,793 L1331,799 L1323,804 L1310,807 L1295,812 L1282,818 L1269,825 L1261,832 L1252,840 M1009,719 L1009,732 L1011,745 L1016,755 L1021,768 L1023,776 L1024,784 L1022,794 L1019,807 L1015,816 L1010,823 L1005,836 L1002,848 L1000,857 M782,793 L789,783 L796,774 L801,769 L810,764 L820,754 L829,746 L838,736 L845,725 L849,714 M1231,612 L1221,610 L1210,610 L1194,607 L1180,607 L1170,606 L1159,605 L1149,603 L1140,603 M899,873 L890,876 L877,877 L869,879 L857,882 L847,886 M883,636 L874,627 L864,617 L852,609 L842,598 L836,593 L822,584 L810,573 L804,567 L795,556 L790,550 L781,542 M1013,792 L1003,791 L992,790 L981,788 L966,783 L950,782 L933,784 L919,790 L910,794 L899,800 L891,804 M1128,575 L1144,569 L1153,565 L1166,559 L1177,553 M1180,756 L1182,766 L1183,775 L1183,784 L1185,792 L1185,800 L1188,807 L1191,819 L1192,832 L1194,845 L1199,857 M1032,681 L1037,669 L1038,662 L1040,650 L1043,640 L1047,633 L1051,619 L1053,608 L1055,594 L1057,579 L1059,568 L1059,560 L1057,551 L1055,542 M1387,865 L1379,857 L1369,849 L1360,843 L1354,838 L1346,830 L1339,824 L1330,817 L1322,809 L1311,799 L1298,789 L1288,777 M1367,736 L1368,747 M844,554 L836,549 L828,542 L822,536 L814,527 L805,515 L801,506 L799,498 M1239,626 L1223,632 L1205,635 L1189,638 L1174,643 L1157,647 L1140,647 L1125,650 L1113,652 L1098,656 L1081,657 L1071,657 L1058,659 L1047,663 M919,624 L932,623 L946,621 L956,622 L968,625 L982,626 L994,628 L1003,629 L1013,631 L1027,630 L1043,626 L1057,624 L1071,623 L1084,624 M820,626 L829,619 L837,608 L846,598 L856,589 L869,582 L879,577 L890,574 L900,569 L916,563 L930,559 L946,558 L959,557 L971,557 L985,555 M1296,669 L1304,672 L1312,675 L1329,677 L1342,681 L1352,681 L1361,680 L1372,678 L1385,677 L1401,672 M1345,642 L1353,654 L1357,667 L1360,678 L1363,685 L1368,693 L1370,705 L1373,719 M1109,692 L1117,696 L1129,705 L1136,710 L1147,720 L1154,732 L1164,742 L1171,750 L1176,762 M1173,616 L1170,626 L1164,636 L1155,645 L1148,649 L1136,655 L1121,662 L1108,666 M1219,695 L1212,684 L1206,673 L1198,661 L1190,654 L1181,643 L1175,632 L1172,619 M1360,843 L1369,849 L1383,855 L1396,859 L1411,866 L1422,868 L1439,872 M1025,703 L1033,699 L1047,691 L1054,687 L1070,682 L1085,677 L1100,671 L1114,663 L1121,657 M1059,689 L1065,683 L1071,672 L1075,665 L1081,656 L1090,647 L1097,637 L1101,629 L1105,623 L1112,617 L1117,612 L1125,601 L1136,593 M1360,699 L1345,705 L1338,709 L1330,713 L1321,716 L1309,722 L1297,725 L1289,728 L1279,731 M1346,789 L1349,781 L1352,773 M875,588 L874,599 L876,607 L881,616 L887,626 L892,633 L898,644 L902,651 L913,662 L922,674 L930,684 L938,695 L947,702 L957,707 L968,710 M1413,820 L1403,817 L1395,814 L1381,808 L1368,804 L1352,800 L1342,794 L1324,790 L1310,785 L1302,781 M954,525 L945,531 L940,537 L932,546 L922,558 L916,566 L911,573 L901,582 L892,589 L886,596 L878,605 L867,611 L861,617 L855,625 L844,635 M894,823 L885,825 L873,832 L862,836 L846,840 L838,842 L824,846 L816,849 L808,853 L795,857 L784,862 L776,867 L765,876 L755,886 M985,836 L978,831 L969,826 L959,821 L948,814 L937,808 L929,804 L919,798 L910,792 L899,785 L890,781 L879,774 L869,769 L856,759 M768,867 L755,860 L743,854 L732,848 L721,841 L706,834 L691,827 L676,822 M1321,834 L1310,827 L1295,821 L1286,814 L1276,810 L1268,805 L1257,800 L1246,797 L1230,791 L1215,787 L1200,784 M1073,880 L1072,866 L1074,860 L1075,850 L1074,840 L1076,834 L1080,825 L1081,811 L1081,803 L1077,794 L1073,787 L1064,778 L1057,771 M1131,819 L1128,808 L1124,800 L1118,787 L1113,780 L1109,772 L1103,764 L1094,756 L1082,749 L1068,742 L1061,738 L1052,733 L1042,726 M737,597 L746,600 L756,602 L764,606 L778,613 L788,616 L799,621 L808,628 L821,637 L836,645 L843,651 L854,662 L867,670 M1334,807 L1326,803 L1313,799 L1302,795 L1292,793 L1281,792 L1266,788 L1255,786 L1239,784 M845,525 L839,537 L837,549 L835,562 L836,569 L837,580 L834,592 L834,606 L835,617 L835,626 L835,634 L833,642 L835,654 L835,663 M1099,607 L1106,602 L1114,599 L1131,598 L1140,598 L1153,599 L1162,600 L1179,602 L1195,601 L1206,600 L1219,597 L1232,595 L1246,595 L1264,596 M876,429 L873,435 L872,443 L870,456 L866,469 L866,479 L863,491 L863,503 L864,513 L868,524 L873,532 L877,544 L880,551 M1312,592 L1299,588 L1286,583 M1049,637 L1040,641 L1030,645 L1019,650 L1011,654 L1003,659 L997,664 L990,670 L982,681 L972,689 L958,697 L947,705 L935,715 M1064,480 L1072,489 L1077,501 L1081,508 L1090,518 L1103,527 L1112,534 L1121,546 L1126,553 L1131,562 L1140,573 L1145,580 L1151,588 M1169,588 L1156,590 L1141,590 L1124,593 L1115,597 L1105,599 L1089,602 L1078,605 L1062,611 L1054,614 M1066,794 L1064,806 L1062,816 L1057,828 L1054,840 L1053,854 L1049,861 L1047,868 L1040,879 M973,527 L990,522 L1006,522 L1020,521 L1034,518 L1050,519 L1065,517 L1075,518 L1084,520 L1096,521 M1109,729 L1124,730 L1133,731 L1146,735 L1158,740 L1172,741 L1181,744 L1196,750 L1209,753 L1224,757 L1240,760 L1258,762 M1328,625 L1333,613 L1342,602 L1352,592 M1013,716 L1009,708 L1002,698 L996,689 L986,678 L978,673 L966,667 L954,661 L941,653 L934,649 L928,644 L921,638 L909,629 M806,572 L811,565 L823,558 L832,552 L840,545 L846,538 L851,532 L856,524 L862,512 M1133,733 L1120,734 L1106,733 L1095,735 L1080,740 L1069,745 L1061,749 L1045,753 L1029,756 M960,495 L960,486 L956,473 L953,460 L949,451 L944,439 M1268,628 L1274,622 L1281,610 L1288,599 L1295,591 M932,893 L938,900 M1062,742 L1068,736 L1073,729 L1079,722 L1089,712 L1094,702 L1104,693 L1112,684 M928,916 L929,903 L930,890 L930,877 L932,866 L934,854 L937,840 L935,826 L935,815 L937,808 L938,795 L942,786 L950,776" stroke="#f2a597" stroke-width="1.3" fill="none" opacity="0.68" stroke-linejoin="round"/>
<path d="M552,895 L539,899 L522,901 L508,902 L495,903 M509,904 L501,909 L487,918 L472,924 L463,930 M543,918 L529,911 L517,905 L505,902 M552,916 L536,912 L527,910 L511,909 L502,906 L491,905 M563,913 L576,920 L583,926 L588,932 M549,892 L531,893 L513,894 L504,895 M650,900 L637,891 L624,883 L612,880 L603,875 L591,870 L576,866 L568,863 L561,858 L553,851 L545,847 M608,924 L619,923 L637,921 L652,920 L664,922 L680,925 L697,926 L710,923 L720,922 M663,918 L655,907 L650,898 L641,891 L630,884 L624,877 L613,869 L603,865 L587,859 L576,856 L567,854 M585,919 L582,926 M796,886 L799,873 L798,861 L795,846 L793,839 L793,828 L796,820 L796,808 L798,800 L801,789 L804,781 M603,926 L613,920 L628,913 L636,907 L645,904 L656,898 L669,894 L684,892 L692,889 L702,883 M679,891 L685,884 L691,878 L699,873 L715,867 L731,865 L740,866 L748,867 L765,871" stroke="#f2a597" stroke-width="1.3" fill="none" opacity="0.7" stroke-linejoin="round"/>
<path d="M1113,524 Q1118,533 1123,540 M820,681 Q820,681 813,684 M829,850 Q828,858 833,866 M1045,682 Q1023,695 1003,706 M1234,819 Q1235,795 1237,769 M1038,558 Q1022,562 1007,568 M886,576 Q891,582 893,587 M1114,776 Q1118,778 1121,783 M1357,845 Q1357,848 1355,851 M935,880 Q949,883 963,888 M1419,694 Q1401,676 1384,660 M1051,720 Q1050,720 1050,717 M1045,543 Q1044,551 1038,558 M1300,615 Q1321,613 1345,608 M1110,846 Q1091,837 1077,826 M935,880 Q939,880 944,877 M833,866 Q853,868 877,869 M914,695 Q905,684 895,675 M1123,540 Q1114,536 1103,536 M1207,657 Q1218,666 1229,672 M1402,827 Q1394,842 1383,856 M795,711 Q791,711 792,709 M716,702 Q717,720 719,742 M1498,851 Q1496,838 1493,828 M914,695 Q930,698 952,698 M1058,801 Q1042,798 1026,793 M1070,723 Q1055,729 1038,732 M1285,660 Q1302,664 1325,667 M820,598 Q837,598 858,599 M738,592 Q736,605 735,618 M1445,833 Q1443,846 1442,862 M1436,787 Q1423,787 1409,792 M918,645 Q931,655 942,669 M759,826 Q758,839 761,850 M759,648 Q748,652 743,659 M1243,756 Q1243,762 1237,769 M770,630 Q751,629 735,630 M833,866 Q851,873 873,878 M1103,536 Q1104,532 1100,531 M835,626 Q844,612 858,599 M780,780 Q797,799 810,816 M1021,864 Q1036,849 1051,833 M1434,859 Q1411,856 1383,856 M920,621 Q917,633 918,645 M877,869 Q883,860 892,854 M1285,660 Q1289,639 1300,615 M989,743 Q1000,765 1016,786 M983,763 Q967,747 953,727 M795,635 Q811,629 831,622 M851,699 Q860,709 870,721 M752,899 Q753,886 753,876 M1393,820 Q1409,814 1426,809 M945,526 Q959,533 976,541 M733,726 Q725,734 719,742 M759,648 Q745,639 735,630 M1308,703 Q1318,702 1327,701 M1207,657 Q1197,646 1193,638 M1110,846 Q1128,855 1150,861 M983,763 Q981,756 983,751 M909,457 Q901,463 888,466 M855,731 Q832,724 813,720 M909,457 Q894,473 877,493 M935,880 Q913,890 888,901 M898,646 Q909,646 918,645 M920,621 Q935,619 944,615 M989,743 Q989,741 986,736 M953,635 Q947,653 942,669 M1224,856 Q1233,851 1238,850 M837,582 Q845,592 858,599 M1038,732 Q1019,721 1003,706 M1026,793 Q1019,790 1016,786 M787,699 Q787,720 783,740 M977,620 Q976,638 978,656 M1024,534 Q1015,516 1000,498 M1264,688 Q1256,695 1246,699 M855,731 Q870,724 883,721 M749,872 Q755,859 761,850 M983,763 Q998,776 1016,786 M918,423 Q902,426 883,426 M914,695 Q891,694 869,693 M1282,866 Q1299,859 1311,852 M783,740 Q797,730 813,720 M953,635 Q959,626 965,615 M829,850 Q818,857 810,862 M1157,868 Q1155,866 1150,861 M831,622 Q826,611 820,598 M813,720 Q819,709 820,694 M752,899 Q755,884 764,872 M1333,669 Q1331,685 1327,701 M1110,846 Q1127,846 1148,843 M975,543 Q959,539 945,535 M877,869 Q877,873 873,878 M1020,662 Q1015,640 1006,617 M982,567 Q973,592 965,615 M1084,800 Q1080,813 1077,826 M743,659 Q730,663 713,671 M828,822 Q827,821 828,817 M820,681 Q819,685 820,694 M766,663 Q765,662 760,663 M1311,810 Q1319,826 1328,847 M1003,706 Q996,694 994,685 M743,854 Q735,863 724,867 M898,646 Q895,659 895,675 M1116,664 Q1119,656 1118,652 M976,541 Q983,543 993,549 M942,839 Q917,846 892,854 M743,854 Q745,864 749,872 M1133,740 Q1149,723 1163,709 M1026,793 Q1054,788 1079,782 M1168,815 Q1169,823 1175,828 M862,629 Q878,623 895,613 M738,592 Q758,581 781,570 M1325,715 Q1311,716 1297,720 M1153,757 Q1136,772 1121,783 M1015,840 Q1000,842 984,847 M787,699 Q792,705 792,709 M872,826 Q876,846 877,869 M795,635 Q781,629 770,627 M1243,756 Q1237,745 1228,738 M886,576 Q905,578 920,582 M863,577 Q875,577 886,576 M1003,706 Q997,721 990,738 M1153,755 Q1154,757 1153,757 M927,595 Q935,607 944,615 M809,425 Q800,443 796,458 M844,540 Q840,556 831,573 M1357,845 Q1345,848 1328,847 M823,868 Q850,872 873,878 M1344,707 Q1350,714 1350,723 M1038,558 Q1032,573 1022,586 M907,632 Q910,637 918,645 M1445,833 Q1438,821 1426,809 M775,876 Q787,877 803,877 M715,768 Q729,767 747,770 M1371,670 Q1352,670 1333,669 M1175,828 Q1161,834 1148,843 M720,916 Q716,891 717,865 M724,867 Q721,865 717,865 M1038,732 Q1045,723 1050,717 M1220,741 Q1231,755 1237,769 M909,457 Q913,438 918,423 M1058,801 Q1048,813 1035,828 M1123,540 Q1102,544 1080,545 M851,699 Q860,686 865,677 M720,916 Q722,905 727,890 M927,595 Q924,590 920,582 M833,772 Q828,795 828,817 M795,649 Q792,640 795,635 M760,663 Q752,661 743,659 M1333,669 Q1327,667 1325,667 M727,890 Q727,880 724,867 M1325,715 Q1312,718 1297,718 M1107,678 Q1115,664 1118,652 M844,540 Q841,520 832,503 M978,656 Q988,671 994,685 M865,677 Q880,674 895,675 M858,599 Q879,607 895,613 M886,576 Q878,570 866,565 M829,850 Q820,835 816,822 M869,515 Q862,509 849,499 M1282,866 Q1267,859 1249,854 M735,630 Q723,652 713,671 M1113,524 Q1110,520 1103,517 M1198,589 Q1216,600 1234,614 M743,659 Q738,644 735,630 M786,826 Q776,839 761,850 M920,621 Q916,627 907,632 M863,577 Q862,588 858,599 M757,668 Q736,669 713,671 M1419,694 Q1393,681 1371,670 M944,877 Q957,857 968,834 M794,842 Q803,851 810,862 M844,540 Q848,530 849,521 M759,648 Q765,640 770,630 M1134,747 Q1135,745 1133,740 M869,515 Q877,533 889,551 M1027,666 Q1017,672 1002,678 M862,629 Q846,628 835,626 M1097,782 Q1107,782 1121,783 M898,646 Q896,632 895,613 M1084,800 Q1068,802 1058,801 M1297,718 Q1284,710 1267,704 M1224,856 Q1194,854 1170,856 M844,540 Q853,554 866,565 M1113,524 Q1104,517 1097,512 M916,589 Q906,601 895,613 M1048,694 Q1044,687 1045,682 M783,740 Q788,724 792,709 M809,425 Q812,438 820,452 M1380,780 Q1386,801 1393,820 M820,681 Q844,678 865,677 M869,693 Q873,707 883,721 M1038,732 Q1042,725 1051,720 M787,699 Q771,682 757,668 M1101,614 Q1093,616 1080,617 M1301,700 Q1284,701 1267,704 M831,622 Q847,610 858,599 M810,816 Q821,816 828,817 M1178,688 Q1181,699 1187,707 M870,721 Q870,707 869,693 M1144,609 Q1124,612 1101,614 M832,503 Q842,512 849,521 M1444,642 Q1424,626 1409,611 M1249,854 Q1247,834 1239,813 M835,626 Q834,635 836,643 M1237,769 Q1249,771 1258,777 M747,770 Q764,756 783,740 M965,615 Q958,614 954,611 M1345,850 Q1352,851 1355,851 M796,686 Q795,698 792,709 M772,778 Q776,757 783,740 M796,686 Q811,689 820,694 M1048,694 Q1069,697 1094,698 M759,826 Q767,804 780,780 M1015,467 Q1006,481 1000,498 M960,659 Q950,663 942,669 M1445,833 Q1441,846 1434,859 M749,872 Q750,874 753,876 M865,677 Q851,660 836,643 M920,621 Q918,606 916,589 M1000,498 Q1000,475 999,456 M1383,856 Q1368,853 1355,851 M1357,845 Q1349,848 1345,850 M844,540 Q866,545 889,551 M1343,691 Q1357,680 1371,670 M989,743 Q988,740 990,738 M849,499 Q850,512 849,521 M820,598 Q823,585 831,573 M832,503 Q843,499 849,499 M914,695 Q896,708 883,721 M794,842 Q776,844 761,850 M888,901 Q890,877 892,854 M916,589 Q920,584 920,582 M1002,860 Q984,873 963,888 M1402,827 Q1396,825 1393,820 M1144,609 Q1130,632 1118,652 M786,826 Q793,835 794,842 M960,659 Q959,671 961,685 M865,677 Q864,685 869,693 M777,589 Q796,583 812,575 M1070,723 Q1061,719 1050,717 M1070,723 Q1059,709 1048,694 M976,541 Q960,537 945,535 M1084,800 Q1092,792 1097,782 M983,751 Q986,745 986,736 M1024,534 Q1010,527 990,517 M1051,833 Q1067,853 1082,870 M1187,707 Q1183,706 1180,706 M1134,747 Q1143,753 1153,757 M772,778 Q760,773 747,770 M769,458 Q782,457 796,458 M978,656 Q988,665 1003,672 M1134,747 Q1124,760 1114,776 M795,635 Q784,611 777,589 M1038,558 Q1023,554 1013,552 M1445,833 Q1455,824 1465,811 M724,867 Q738,869 749,872 M1513,799 Q1490,810 1470,819 M916,589 Q919,593 927,595 M1238,850 Q1246,853 1249,854 M829,850 Q826,859 823,868 M953,727 Q950,723 953,723 M1148,843 Q1150,851 1150,861 M1371,670 Q1368,681 1362,694 M832,503 Q813,502 793,502 M812,575 Q821,573 831,573 M832,503 Q829,478 820,452 M1144,609 Q1158,605 1175,605 M1267,704 Q1256,703 1246,699 M759,648 Q760,655 766,663 M851,699 Q831,710 813,720 M1006,797 Q997,821 984,847 M837,582 Q833,576 831,573 M787,570 Q781,581 777,589 M1311,604 Q1292,596 1269,585 M945,526 Q967,523 990,517 M1257,612 Q1244,614 1234,614 M884,591 Q874,596 858,599 M1114,776 Q1103,779 1097,782 M812,575 Q817,587 820,598 M888,901 Q881,891 873,878 M953,635 Q938,641 918,645 M1070,723 Q1061,721 1051,720 M1409,792 Q1419,802 1426,809 M1343,691 Q1340,682 1333,669 M855,731 Q845,753 833,772 M1198,589 Q1188,601 1176,615 M1498,851 Q1503,851 1504,848 M780,780 Q784,803 786,826 M810,816 Q799,822 786,826 M1513,799 Q1487,806 1465,811 M1436,787 Q1429,798 1426,809 M1243,756 Q1249,767 1258,777 M1367,774 Q1376,778 1380,780 M833,866 Q830,866 823,868 M953,723 Q977,715 1003,706 M1257,612 Q1240,599 1221,590 M715,818 Q737,824 759,826 M907,632 Q905,640 898,646 M1285,660 Q1286,670 1290,678 M1301,700 Q1313,682 1325,667 M862,629 Q846,635 836,643 M1234,819 Q1240,837 1249,854 M833,772 Q819,794 810,816 M1325,667 Q1309,671 1290,678 M1434,859 Q1439,859 1442,862 M831,573 Q848,570 866,565 M764,872 Q757,873 753,876 M1193,638 Q1199,614 1198,589 M770,627 Q753,624 735,618 M1002,860 Q991,854 984,847 M1024,534 Q1007,543 993,549 M1311,852 Q1310,830 1311,810 M1362,694 Q1359,710 1350,723" stroke="#f2ab9c" stroke-width="1.0" fill="none" opacity="0.48"/>
<path d="M767,335 L755,331 L744,327 L733,320 M788,397 L799,404 L812,409 L822,413 M778,349 L792,354 M666,375 L672,378 L685,383 L696,385 L709,384 L723,388 M769,389 L766,379 L764,372 L765,359 L768,347 L772,339 M847,412 L844,404 L840,399 L833,388 M765,361 L760,372 L758,382 L756,389 M785,314 L774,314 L763,311 L748,308 M786,391 L784,386 L777,376 M695,300 L686,310 L681,315 L676,324 L672,335 M616,297 L627,295 L634,293 L643,289 L651,284 L660,274 M644,416 L654,411 L664,402 L677,396 M728,345 L720,342 L709,336 L699,329 L693,324 L686,314 L676,305 M694,414 L685,411 L670,409 L662,409 L647,409 L639,407 M708,304 L715,314 L720,326 L721,334 L718,345 L716,353 M757,400 L765,405 L774,410 L782,416 M814,404 L823,407 L830,409 L844,409 M668,318 L677,315 L691,313 L701,311 L713,307 M685,336 L676,335 L668,333 L653,331 L639,333 M636,382 L639,388 L642,397 L647,406 L648,414 L652,420 M703,380 L712,375 L725,371 L732,369 L742,365 L751,362 L761,359 M804,335 L809,342 M865,395 L853,394 L845,394 L837,395 M824,400 L812,403 L799,409 L792,414 L786,420 L776,430 L771,438 M787,323 L780,332 L777,339 L775,347 L775,357 M815,317 L808,310 L800,303 M740,338 L749,331 L757,325 L769,320 L777,316 L785,313 M667,319 L658,328 L649,335 L640,343 L634,350 M730,355 L741,360 L754,365 M675,369 L671,374 L666,385 L663,394 L663,400 L667,411 L673,418 M742,365 L743,377 L747,384 L752,391 L757,395 L762,401 M823,396 L826,390 L832,379 M625,300 L617,310 L614,318 L614,325 L614,334 L613,343 L609,351 M645,400 L650,410 L659,420 L666,430 M655,384 L647,389 L637,392 M645,406 L643,413 L640,420 L637,426 M806,307 L815,308 L823,308 L838,308 M770,349 L770,337 L769,330 L772,320 M869,418 L861,420 L846,422 L835,424 L826,424 M726,371 L722,379 L716,385 L709,391 L703,398 L695,405 M882,395 L873,393 L866,392 L853,390 L844,390 M762,406 L756,400 L748,394 L739,386 M639,415 L651,413 L661,412 L671,411 M738,350 L745,349 L758,346 L769,339 L782,331 M703,346 L705,337 L704,329 L702,320 L703,313 L704,301 L708,291 M757,384 L754,377 L751,366 L747,357 L746,351 M673,368 L669,374 L666,381 L663,389 L656,398 M710,367 L715,373 L719,379 L721,388 L720,398 M664,385 L652,380 L640,375 L629,368 L622,365 L612,361 L601,358 M654,347 L651,353 L647,361 L642,367 M744,318 L753,318 L763,320 L771,322 L785,325 L798,330 M616,307 L610,303 L603,296 M651,376 L653,381 L655,389 L656,395 L663,405 L667,411 L674,419 M704,322 L709,318 L720,312 L730,309 L737,307 M686,407 L691,402 L699,397 L708,392 L715,388 M725,394 L722,405 L721,412 L719,420" stroke="#f2b3a3" stroke-width="0.8" fill="none" opacity="0.5" stroke-linejoin="round"/>
<path d="M57,501 L45,498 L37,496 L25,493 M22,498 L28,504 L34,513 M430,461 L437,469 L441,478 L445,484 M280,534 L271,540 L261,549 L254,555 M331,498 L338,505 L342,512 L344,518 L349,527 L353,536 M499,432 L510,437 L523,443 M318,454 L325,449 L334,441 L341,435 L348,427 L354,419 M25,516 L34,510 L40,506 L50,501 M242,476 L229,482 L218,489 L210,492 L198,497 M310,530 L301,534 L293,538 L282,545 L275,552 L270,560 L264,568 M314,525 L302,521 L294,520 L284,520 L273,522 L264,524 M474,455 L488,456 L499,455 L508,453 M265,467 L270,479 L274,488 L280,498 M244,479 L259,477 L272,477 L281,479 L289,482 L298,486 M79,534 L67,538 L57,540 L47,541 L39,543 L31,545 M297,459 L285,456 L272,454 L265,455 L253,458 L241,465 L233,471 L228,476 M513,447 L508,441 L498,432 L489,425 L479,418 M459,446 L453,452 L449,459 L447,466 L444,478 M271,516 L283,514 L296,510 L304,507 L312,503 L322,498 M196,541 L203,530 L208,521 L213,515 L220,510 L233,503 L238,498 L248,492 M74,515 L65,510 L57,508 L45,503 L38,500 L25,497 M416,459 L421,454 L428,447 L432,439 L441,430 L444,424 L448,416 M351,520 L355,510 L355,502 L356,494 L356,488 L358,478 L358,469 L360,462 M340,437 L350,434 L359,431 L373,427 M490,472 L484,466 L477,459 L472,447 L466,437 L457,430 L448,424 M344,520 L335,522 L326,524 L317,526 L303,531 L289,534 L280,534 L266,535 M435,436 L424,435 L412,434 L402,433 L387,435 L380,436 L371,438 L363,440 M257,448 L261,459 L262,469 L261,480 M234,506 L227,497 L217,488 L209,480 L200,470 M319,482 L315,491 L314,498 L312,507 L308,517 L307,523 M151,491 L160,485 L166,478 L173,473 M357,486 L356,497 L356,504 L358,510 L363,518 L372,527 L377,536 L379,546 M226,522 L219,517 L213,511 L205,506 L192,499 L183,494 L175,486 L167,480 M255,492 L266,496 L274,499 L286,501 L299,502 L314,502 L326,502 M320,460 L308,464 L298,468 L288,471 L277,474 L267,479 L261,483 M283,501 L271,499 L256,495 L243,494 L233,490 L222,487 L215,485 M216,464 L227,466 L241,472 L248,477 L260,482 L272,485 L285,485 L293,484 M469,475 L457,480 L447,485 L440,489 L433,494 L425,504 L419,512 L411,520 M85,535 L97,529 L104,526 L115,521 L128,515 L142,512 L152,512 M270,465 L277,469 L289,474 L296,477 L310,481 L319,483 L334,486 M437,457 L431,447 L428,439 L428,430 M358,444 L365,449 L373,457 L381,463 L391,469 M59,490 L68,489 L76,489 L84,490 L96,490 M66,517 L56,522 M404,449 L398,445 L393,438 L387,428 L381,422 M317,487 L323,493 L330,501 L334,507 L342,516 L348,520 L353,525 L362,533 M377,502 L378,511 L382,520 L387,531 L391,538 L395,548 L398,556 M396,425 L393,418 L389,412 M184,494 L178,502 L173,512 L171,518 L164,528 M369,455 L367,463 L365,470 L364,481 L362,487 L363,499 L363,508 L363,515 M373,536 L368,544 L360,551 L354,555 L343,560 L333,562 L320,565 L310,568 M412,461 L414,467 L418,475 L420,487 L420,494 L417,507 L415,515 M236,500 L226,499 L218,500 L208,500 L199,501 L188,503 M78,497 L80,491 L80,483 L80,476 M174,507 L166,507 L156,506 L147,503 L133,500 L125,500 M267,504 L272,516 L275,528 L281,536 L286,544 L290,555 L290,561 L293,571 M168,534 L181,532 L187,529 L201,526 M238,519 L236,510 L233,501 L233,494 L231,485 M233,461 L224,457 L215,455 M227,524 L238,520 L250,515 L264,511 L277,504 L287,501 L296,499 L308,497 M497,446 L493,436 L491,426 L491,419 M455,430 L458,419 M478,437 L470,439 L460,440 L452,440 L440,437 M33,506 L25,516 M482,462 L486,455 L491,449 L499,444 L510,439 M76,518 L84,515 L95,509 L103,501 L115,494 L127,489 L136,484 L145,479 M372,464 L365,463 L352,460 L338,459 M322,492 L334,493 L346,496 L360,498 L373,500 M429,450 L437,449 L444,445 L456,442 L468,435 L481,430 M311,486 L301,483 L290,482 L281,481 M429,434 L418,439 L412,442 L403,450 M420,519 L414,513 L407,505 L400,497 L397,489 L391,479 L388,472 L387,466 M253,443 L258,434 M410,416 L413,422 L420,431 L422,437 M121,476 L121,485 L119,496 L121,508 L122,517 L119,528 L120,535 M274,440 L285,433 L295,428 L308,421 M300,514 L288,518 L280,524 L270,534 L265,538 L255,543 L243,549 L237,553 M506,432 L498,427 L486,423 L475,417 M271,518 L276,507 L279,500 L283,494 L288,483 L292,476 L295,471 L297,461 M112,532 L107,523 L101,515 L97,509 L90,501 L83,495 M66,504 L60,499 L55,490 L51,484 M219,514 L226,517 L232,520 L241,525 L255,529 L267,530 L278,533 L286,535 M395,483 L410,480 L425,478 L434,477 M480,464 L473,469 L466,476 L457,485 L446,491 M238,497 L232,500 L222,505 L213,509 L202,516 L193,521 L186,528 M310,502 L321,495 L334,491 L343,489" stroke="#f2aaa0" stroke-width="0.9" fill="none" opacity="0.6" stroke-linejoin="round"/>
<path d="M1328,245 L1339,247 L1356,250 L1368,248 L1386,250 M1482,199 L1483,184 L1488,174 L1498,162 L1504,153 M1224,189 L1215,195 L1208,202 M1384,157 L1370,164 L1359,171 L1346,178 L1329,190 L1321,198 L1309,211 M1407,209 L1407,219 L1406,231 L1406,240 L1411,257 L1417,274 M1465,146 L1473,161 L1476,172 L1482,184 L1485,199 M1498,166 L1476,164 L1462,165 L1440,165 L1418,164 M1238,195 L1258,189 L1276,183 L1292,180 L1312,176 L1336,175 M1298,227 L1283,224 L1269,223 L1255,222 L1235,217 M1276,237 L1270,223 L1264,213 L1256,197 L1254,187 L1251,178 M1421,272 L1407,259 L1402,251 L1396,233 L1393,218 M1476,141 L1468,130 L1461,115 M1489,188 L1469,196 L1453,205 L1445,212 L1431,226 M1434,166 L1441,155 L1450,145 L1467,134 M1483,209 L1473,205 L1452,197 L1436,184 L1422,178 M1461,128 L1475,137 L1490,144 L1501,152 L1508,161 M1221,189 L1205,188 L1193,189 L1176,190 M1377,198 L1387,202 L1401,211 L1414,217 L1434,220 M1500,163 L1508,175 L1514,190 L1516,204 M1281,189 L1289,199 L1296,215 L1303,226 L1308,236 L1311,246 L1322,259 M1417,204 L1426,196 L1440,182 L1446,169 L1457,159 L1469,151 L1487,141 M1343,205 L1331,201 L1311,197 L1301,194 L1290,189 L1281,182 L1270,177 M1455,169 L1473,159 L1485,154 L1505,150 M1295,202 L1300,194 L1307,186 L1317,175 L1332,162 M1479,247 L1477,258 L1473,273 M1466,146 L1479,144 L1497,140 M1445,176 L1438,190 L1431,208 L1425,220 L1417,227 L1403,237 L1394,249 M1360,123 L1373,119 L1386,113 L1395,105 M1435,126 L1442,137 L1453,153 L1462,164 L1468,179 L1476,191 M1434,174 L1432,159 L1431,146 L1433,131 L1432,120 L1435,105 M1458,161 L1440,154 L1429,148 L1422,141 L1416,132 L1413,122 L1409,109 M1424,209 L1438,210 L1455,210 L1471,214 M1351,164 L1363,180 L1372,192 L1379,207 L1380,220 L1384,232 L1386,243 M1395,175 L1386,179 L1367,186 L1344,188 L1328,188 L1308,190 L1294,192 M1418,244 L1426,254 L1432,266 L1446,281" stroke="#d9b8c0" stroke-width="1.0" fill="none" opacity="0.4" stroke-linejoin="round"/>
</g>
<g stroke="#e3839e" stroke-width="1.7" fill="none" opacity="0.78" stroke-linejoin="round">
<path d="M1263,753 L1200,700 L1130,675 L1065,654 L1044,611 L1021,600 L1012,582 L997,554 L995,537 L965,507 L955,500"/>
<path d="M1263,753 L1230,700 L1165,622 L1100,580 L1025,550 L970,511 L925,453 L915,420 L880,395 L830,372"/>
<path d="M971,630 L948,622 L912,600 L880,577 L867,550 L880,535 L860,520 L825,512 L805,490 L800,460 L790,430 L760,400 L700,380"/>
<path d="M948,622 L930,633 L920,660 L930,686 L926,705 L900,727 L877,752 L864,790 L830,830 L790,870 L740,895 L715,905"/>
<path d="M830,743 L877,754 L980,747 L1044,761 L1130,767 L1200,762 L1263,753"/>
<path d="M1263,753 L1130,731 L1093,718 L1069,697 L1044,675 L1001,652 L964,641 L948,628"/>
<path d="M830,535 L882,528 L933,511 L970,507 L1034,520 L1089,515"/>
<path d="M1263,753 L1250,700 L1243,655 L1250,635"/>
<path d="M1263,753 L1200,790 L1163,828 L1097,857"/>
<path d="M1263,753 L1300,800 L1320,840 L1333,872"/>
<path d="M1263,753 L1350,765 L1420,780 L1488,790 L1519,800"/>
<path d="M1263,753 L1330,725 L1377,700 L1420,680"/>
<path d="M1040,870 L1097,857 L1163,870 L1200,870"/>
<path d="M1200,790 L1100,800 L1016,820 L900,850 L800,880 L715,900"/>
<path d="M650,385 L700,378 L775,372 L800,365"/>
<path d="M404,535 L430,500 L470,460 L496,448"/>
<path d="M404,535 L300,530 L200,540 L120,590 L60,610"/>
<path d="M404,535 L300,560 L200,600"/>
</g>
<ellipse cx="1263" cy="752" rx="36" ry="22" stroke="#e3839e" stroke-width="1.7" fill="none" opacity="0.78"/>
<path d="M823,765 L850,748 L880,728 L896,715 L892,722 L870,738 L840,760 L823,770 Z" fill="#aad3df"/>
<g stroke="#9c97c6" stroke-width="1.3" fill="none" opacity="0.75">
<path d="M0,114 L100,115 L200,112 L300,113 L370,117 L380,128 L372,140 L330,145 L250,152 L150,160 L60,167 L0,168"/>
<path d="M537,185 L622,180 L584,201 Z"/>
<path d="M0,300 L40,305 L0,312"/>
<path d="M352,297 A34,7 0 1 0 420,297 A34,7 0 1 0 352,297 Z"/>
<path d="M550,256 A37,8 0 1 0 625,256 A37,8 0 1 0 550,256 Z"/>
<path d="M655,257 A30,7 0 1 0 715,257 A30,7 0 1 0 655,257 Z"/>
<path d="M420,296 L450,290 L494,277 L546,269 L598,265 L680,264 L726,263 L735,249 L779,242 L834,243 L842,248 L818,263 L799,277 L765,289 L769,293 L818,295 L878,301 L897,308 L878,324 L858,340"/>
<path d="M803,227 L818,220 L878,208 L917,212 L929,222 L897,237 L878,243 L882,247 L858,249 L838,248 L842,237 L854,237 L846,232 L828,233 Z"/>
<path d="M420,296 L400,320 L385,345 L410,370 L440,390 L445,400 L440,405 L390,400 L300,400 L215,432 L170,454 L90,452 L0,474"/>
<path d="M1290,99 L1300,110 L1270,130 L1200,150 L1150,175 L1150,200 L1200,225 L1240,245 L1270,260 L1350,280 L1420,295 L1519,300"/>
<path d="M858,340 L852,345 L861,351 L852,358 L892,376 L937,385 L948,405 L981,429 L1004,438 L1049,445 L1120,470 L1125,488 L1150,500 L1210,514 L1260,530 L1300,545 L1400,575 L1460,600 L1480,640 L1490,680 L1495,720 L1480,740"/>
<path d="M445,400 L480,420 L520,440 L545,452 L560,458 L576,459"/>
<path d="M576,459 L530,482"/>
<path d="M622,452 A67,25 0 1 0 622.1,452 Z"/>
<path d="M677,452 L710,473 L747,498 L751,512 L742,526 L678,527 L627,519 L569,528 L553,540"/>
<path d="M726,528 L783,540"/>
<path d="M0,744 L107,718"/>
<path d="M376,881 L346,936"/>
<path d="M1226,936 L1283,920 L1339,912 L1390,917"/>
<path d="M300,460 L330,470 L350,475 L390,480 L420,478 L440,490 L445,500"/>
</g>
<g font-family="Liberation Sans" filter="url(#lblur)">
<text transform="translate(1221.0,748.0) scale(1,0.795)" font-size="18.45" textLength="73.5" lengthAdjust="spacing" font-weight="normal" fill="none" stroke="#f2efe9" stroke-width="2.4" stroke-opacity="0.6">London</text><text transform="translate(1221.0,748.0) scale(1,0.795)" font-size="18.45" textLength="73.5" lengthAdjust="spacing" font-weight="normal" fill="#606060" stroke="#606060" stroke-width="0.55">London</text>
<text transform="translate(842.0,777.0) scale(1,0.801)" font-size="18.30" textLength="63.0" lengthAdjust="spacing" font-weight="normal" fill="none" stroke="#f2efe9" stroke-width="2.4" stroke-opacity="0.6">Bristol</text><text transform="translate(842.0,777.0) scale(1,0.801)" font-size="18.30" textLength="63.0" lengthAdjust="spacing" font-weight="normal" fill="#606060" stroke="#606060" stroke-width="0.55">Bristol</text>
<text transform="translate(847.0,815.0) scale(1,0.798)" font-size="16.10" textLength="45.4" lengthAdjust="spacing" font-weight="normal" fill="none" stroke="#f2efe9" stroke-width="2.4" stroke-opacity="0.6">Wells</text><text transform="translate(847.0,815.0) scale(1,0.798)" font-size="16.10" textLength="45.4" lengthAdjust="spacing" font-weight="normal" fill="#606060" stroke="#606060" stroke-width="0.55">Wells</text>
<text transform="translate(685.7,907.0) scale(1,0.783)" font-size="17.84" textLength="59.3" lengthAdjust="spacing" font-weight="normal" fill="none" stroke="#f2efe9" stroke-width="2.4" stroke-opacity="0.6">Exeter</text><text transform="translate(685.7,907.0) scale(1,0.783)" font-size="17.84" textLength="59.3" lengthAdjust="spacing" font-weight="normal" fill="#606060" stroke="#606060" stroke-width="0.55">Exeter</text>
<text transform="translate(977.0,822.2) scale(1,0.834)" font-size="16.24" textLength="79.5" lengthAdjust="spacing" font-weight="normal" fill="none" stroke="#f2efe9" stroke-width="2.4" stroke-opacity="0.6">Salisbury</text><text transform="translate(977.0,822.2) scale(1,0.834)" font-size="16.24" textLength="79.5" lengthAdjust="spacing" font-weight="normal" fill="#606060" stroke="#606060" stroke-width="0.55">Salisbury</text>
<text transform="translate(1111.8,832.2) scale(1,0.762)" font-size="16.87" textLength="98.7" lengthAdjust="spacing" font-weight="normal" fill="none" stroke="#f2efe9" stroke-width="2.4" stroke-opacity="0.6">Winchester</text><text transform="translate(1111.8,832.2) scale(1,0.762)" font-size="16.87" textLength="98.7" lengthAdjust="spacing" font-weight="normal" fill="#606060" stroke="#606060" stroke-width="0.55">Winchester</text>
<text transform="translate(1032.8,852.0) scale(1,0.783)" font-size="17.85" textLength="125.0" lengthAdjust="spacing" font-weight="normal" fill="none" stroke="#f2efe9" stroke-width="2.4" stroke-opacity="0.6">Southampton</text><text transform="translate(1032.8,852.0) scale(1,0.783)" font-size="17.85" textLength="125.0" lengthAdjust="spacing" font-weight="normal" fill="#606060" stroke="#606060" stroke-width="0.55">Southampton</text>
<text transform="translate(1113.0,890.0) scale(1,0.743)" font-size="18.79" textLength="114.6" lengthAdjust="spacing" font-weight="normal" fill="none" stroke="#f2efe9" stroke-width="2.4" stroke-opacity="0.6">Portsmouth</text><text transform="translate(1113.0,890.0) scale(1,0.743)" font-size="18.79" textLength="114.6" lengthAdjust="spacing" font-weight="normal" fill="#606060" stroke="#606060" stroke-width="0.55">Portsmouth</text>
<text transform="translate(1287.0,868.0) scale(1,0.726)" font-size="18.29" textLength="82.8" lengthAdjust="spacing" font-weight="normal" fill="none" stroke="#f2efe9" stroke-width="2.4" stroke-opacity="0.6">Brighton</text><text transform="translate(1287.0,868.0) scale(1,0.726)" font-size="18.29" textLength="82.8" lengthAdjust="spacing" font-weight="normal" fill="#606060" stroke="#606060" stroke-width="0.55">Brighton</text>
<text transform="translate(1040.0,716.0) scale(1,0.783)" font-size="15.16" textLength="54.0" lengthAdjust="spacing" font-weight="normal" fill="none" stroke="#f2efe9" stroke-width="2.4" stroke-opacity="0.6">Oxford</text><text transform="translate(1040.0,716.0) scale(1,0.783)" font-size="15.16" textLength="54.0" lengthAdjust="spacing" font-weight="normal" fill="#606060" stroke="#606060" stroke-width="0.55">Oxford</text>
<text transform="translate(1169.0,716.0) scale(1,0.863)" font-size="14.56" textLength="72.4" lengthAdjust="spacing" font-weight="normal" fill="none" stroke="#f2efe9" stroke-width="2.4" stroke-opacity="0.6">St Albans</text><text transform="translate(1169.0,716.0) scale(1,0.863)" font-size="14.56" textLength="72.4" lengthAdjust="spacing" font-weight="normal" fill="#606060" stroke="#606060" stroke-width="0.55">St Albans</text>
<text transform="translate(1285.7,717.5) scale(1,0.813)" font-size="15.12" textLength="91.3" lengthAdjust="spacing" font-weight="normal" fill="none" stroke="#f2efe9" stroke-width="2.4" stroke-opacity="0.6">Chelmsford</text><text transform="translate(1285.7,717.5) scale(1,0.813)" font-size="15.12" textLength="91.3" lengthAdjust="spacing" font-weight="normal" fill="#606060" stroke="#606060" stroke-width="0.55">Chelmsford</text>
<text transform="translate(1445.0,804.5) scale(1,0.853)" font-size="16.38" textLength="95.0" lengthAdjust="spacing" font-weight="normal" fill="none" stroke="#f2efe9" stroke-width="2.4" stroke-opacity="0.6">Canterbury</text><text transform="translate(1445.0,804.5) scale(1,0.853)" font-size="16.38" textLength="95.0" lengthAdjust="spacing" font-weight="normal" fill="#606060" stroke="#606060" stroke-width="0.55">Canterbury</text>
<text transform="translate(874.0,700.0) scale(1,0.734)" font-size="14.26" textLength="81.0" lengthAdjust="spacing" font-weight="normal" fill="none" stroke="#f2efe9" stroke-width="2.4" stroke-opacity="0.6">Gloucester</text><text transform="translate(874.0,700.0) scale(1,0.734)" font-size="14.26" textLength="81.0" lengthAdjust="spacing" font-weight="normal" fill="#707070" stroke="#707070" stroke-width="0.35">Gloucester</text>
<text transform="translate(875.0,671.0) scale(1,0.690)" font-size="14.16" textLength="75.0" lengthAdjust="spacing" font-weight="normal" fill="none" stroke="#f2efe9" stroke-width="2.4" stroke-opacity="0.6">Worcester</text><text transform="translate(875.0,671.0) scale(1,0.690)" font-size="14.16" textLength="75.0" lengthAdjust="spacing" font-weight="normal" fill="#707070" stroke="#707070" stroke-width="0.35">Worcester</text>
<text transform="translate(894.0,625.3) scale(1,0.645)" font-size="16.24" textLength="103.0" lengthAdjust="spacing" font-weight="normal" fill="none" stroke="#f2efe9" stroke-width="2.4" stroke-opacity="0.6">Birmingham</text><text transform="translate(894.0,625.3) scale(1,0.645)" font-size="16.24" textLength="103.0" lengthAdjust="spacing" font-weight="normal" fill="#707070" stroke="#707070" stroke-width="0.35">Birmingham</text>
<text transform="translate(973.0,646.0) scale(1,0.731)" font-size="13.37" textLength="63.0" lengthAdjust="spacing" font-weight="normal" fill="none" stroke="#f2efe9" stroke-width="2.4" stroke-opacity="0.6">Coventry</text><text transform="translate(973.0,646.0) scale(1,0.731)" font-size="13.37" textLength="63.0" lengthAdjust="spacing" font-weight="normal" fill="#707070" stroke="#707070" stroke-width="0.35">Coventry</text>
<text transform="translate(922.0,604.0) scale(1,0.738)" font-size="12.31" textLength="55.0" lengthAdjust="spacing" font-weight="normal" fill="none" stroke="#f2efe9" stroke-width="2.4" stroke-opacity="0.6">Lichfield</text><text transform="translate(922.0,604.0) scale(1,0.738)" font-size="12.31" textLength="55.0" lengthAdjust="spacing" font-weight="normal" fill="#707070" stroke="#707070" stroke-width="0.35">Lichfield</text>
<text transform="translate(1012.0,610.0) scale(1,0.805)" font-size="12.15" textLength="58.0" lengthAdjust="spacing" font-weight="normal" fill="none" stroke="#f2efe9" stroke-width="2.4" stroke-opacity="0.6">Leicester</text><text transform="translate(1012.0,610.0) scale(1,0.805)" font-size="12.15" textLength="58.0" lengthAdjust="spacing" font-weight="normal" fill="#707070" stroke="#707070" stroke-width="0.35">Leicester</text>
<text transform="translate(1121.0,628.0) scale(1,0.829)" font-size="13.47" textLength="96.0" lengthAdjust="spacing" font-weight="normal" fill="none" stroke="#f2efe9" stroke-width="2.4" stroke-opacity="0.6">Peterborough</text><text transform="translate(1121.0,628.0) scale(1,0.829)" font-size="13.47" textLength="96.0" lengthAdjust="spacing" font-weight="normal" fill="#707070" stroke="#707070" stroke-width="0.35">Peterborough</text>
<text transform="translate(1251.0,641.6) scale(1,0.868)" font-size="12.87" textLength="21.0" lengthAdjust="spacing" font-weight="normal" fill="none" stroke="#f2efe9" stroke-width="2.4" stroke-opacity="0.6">Ely</text><text transform="translate(1251.0,641.6) scale(1,0.868)" font-size="12.87" textLength="21.0" lengthAdjust="spacing" font-weight="normal" fill="#707070" stroke="#707070" stroke-width="0.35">Ely</text>
<text transform="translate(1198.0,658.7) scale(1,0.838)" font-size="14.16" textLength="80.4" lengthAdjust="spacing" font-weight="normal" fill="none" stroke="#f2efe9" stroke-width="2.4" stroke-opacity="0.6">Cambridge</text><text transform="translate(1198.0,658.7) scale(1,0.838)" font-size="14.16" textLength="80.4" lengthAdjust="spacing" font-weight="normal" fill="#606060" stroke="#606060" stroke-width="0.55">Cambridge</text>
<text transform="translate(1340.0,621.0) scale(1,0.723)" font-size="13.52" textLength="58.0" lengthAdjust="spacing" font-weight="normal" fill="none" stroke="#f2efe9" stroke-width="2.4" stroke-opacity="0.6">Norwich</text><text transform="translate(1340.0,621.0) scale(1,0.723)" font-size="13.52" textLength="58.0" lengthAdjust="spacing" font-weight="normal" fill="#707070" stroke="#707070" stroke-width="0.35">Norwich</text>
<text transform="translate(988.0,577.0) scale(1,0.657)" font-size="12.75" textLength="77.0" lengthAdjust="spacing" font-weight="normal" fill="none" stroke="#f2efe9" stroke-width="2.4" stroke-opacity="0.6">Nottingham</text><text transform="translate(988.0,577.0) scale(1,0.657)" font-size="12.75" textLength="77.0" lengthAdjust="spacing" font-weight="normal" fill="#707070" stroke="#707070" stroke-width="0.35">Nottingham</text>
<text transform="translate(971.0,590.0) scale(1,0.680)" font-size="12.33" textLength="38.0" lengthAdjust="spacing" font-weight="normal" fill="none" stroke="#f2efe9" stroke-width="2.4" stroke-opacity="0.6">Derby</text><text transform="translate(971.0,590.0) scale(1,0.680)" font-size="12.33" textLength="38.0" lengthAdjust="spacing" font-weight="normal" fill="#707070" stroke="#707070" stroke-width="0.35">Derby</text>
<text transform="translate(1066.6,551.7) scale(1,0.729)" font-size="11.49" textLength="44.4" lengthAdjust="spacing" font-weight="normal" fill="none" stroke="#f2efe9" stroke-width="2.4" stroke-opacity="0.6">Lincoln</text><text transform="translate(1066.6,551.7) scale(1,0.729)" font-size="11.49" textLength="44.4" lengthAdjust="spacing" font-weight="normal" fill="#707070" stroke="#707070" stroke-width="0.35">Lincoln</text>
<text transform="translate(840.0,540.0) scale(1,0.712)" font-size="13.74" textLength="83.0" lengthAdjust="spacing" font-weight="normal" fill="none" stroke="#f2efe9" stroke-width="2.4" stroke-opacity="0.6">Manchester</text><text transform="translate(840.0,540.0) scale(1,0.712)" font-size="13.74" textLength="83.0" lengthAdjust="spacing" font-weight="normal" fill="#707070" stroke="#707070" stroke-width="0.35">Manchester</text>
<text transform="translate(941.0,538.0) scale(1,0.724)" font-size="13.51" textLength="62.0" lengthAdjust="spacing" font-weight="normal" fill="none" stroke="#f2efe9" stroke-width="2.4" stroke-opacity="0.6">Sheffield</text><text transform="translate(941.0,538.0) scale(1,0.724)" font-size="13.51" textLength="62.0" lengthAdjust="spacing" font-weight="normal" fill="#707070" stroke="#707070" stroke-width="0.35">Sheffield</text>
<text transform="translate(933.0,505.0) scale(1,0.823)" font-size="12.73" textLength="40.0" lengthAdjust="spacing" font-weight="normal" fill="none" stroke="#f2efe9" stroke-width="2.4" stroke-opacity="0.6">Leeds</text><text transform="translate(933.0,505.0) scale(1,0.823)" font-size="12.73" textLength="40.0" lengthAdjust="spacing" font-weight="normal" fill="#707070" stroke="#707070" stroke-width="0.35">Leeds</text>
<text transform="translate(936.0,521.0) scale(1,0.639)" font-size="10.93" textLength="55.0" lengthAdjust="spacing" font-weight="normal" fill="none" stroke="#f2efe9" stroke-width="2.4" stroke-opacity="0.6">Wakefield</text><text transform="translate(936.0,521.0) scale(1,0.639)" font-size="10.93" textLength="55.0" lengthAdjust="spacing" font-weight="normal" fill="#707070" stroke="#707070" stroke-width="0.35">Wakefield</text>
<text transform="translate(1081.0,515.0) scale(1,0.623)" font-size="11.20" textLength="23.0" lengthAdjust="spacing" font-weight="normal" fill="none" stroke="#f2efe9" stroke-width="2.4" stroke-opacity="0.6">Hull</text><text transform="translate(1081.0,515.0) scale(1,0.623)" font-size="11.20" textLength="23.0" lengthAdjust="spacing" font-weight="normal" fill="#707070" stroke="#707070" stroke-width="0.35">Hull</text>
<text transform="translate(991.0,498.0) scale(1,0.667)" font-size="9.42" textLength="22.0" lengthAdjust="spacing" font-weight="normal" fill="none" stroke="#f2efe9" stroke-width="2.4" stroke-opacity="0.6">York</text><text transform="translate(991.0,498.0) scale(1,0.667)" font-size="9.42" textLength="22.0" lengthAdjust="spacing" font-weight="normal" fill="#707070" stroke="#707070" stroke-width="0.35">York</text>
<text transform="translate(931.0,479.0) scale(1,0.645)" font-size="9.74" textLength="30.0" lengthAdjust="spacing" font-weight="normal" fill="none" stroke="#f2efe9" stroke-width="2.4" stroke-opacity="0.6">Ripon</text><text transform="translate(931.0,479.0) scale(1,0.645)" font-size="9.74" textLength="30.0" lengthAdjust="spacing" font-weight="normal" fill="#707070" stroke="#707070" stroke-width="0.35">Ripon</text>
<text transform="translate(908.0,443.0) scale(1,0.683)" font-size="10.23" textLength="42.0" lengthAdjust="spacing" font-weight="normal" fill="none" stroke="#f2efe9" stroke-width="2.4" stroke-opacity="0.6">Durham</text><text transform="translate(908.0,443.0) scale(1,0.683)" font-size="10.23" textLength="42.0" lengthAdjust="spacing" font-weight="normal" fill="#707070" stroke="#707070" stroke-width="0.35">Durham</text>
<text transform="translate(916.0,435.0) scale(1,0.648)" font-size="9.70" textLength="58.0" lengthAdjust="spacing" font-weight="normal" fill="none" stroke="#f2efe9" stroke-width="2.4" stroke-opacity="0.6">Sunderland</text><text transform="translate(916.0,435.0) scale(1,0.648)" font-size="9.70" textLength="58.0" lengthAdjust="spacing" font-weight="normal" fill="#707070" stroke="#707070" stroke-width="0.35">Sunderland</text>
<text transform="translate(888.0,419.0) scale(1,0.619)" font-size="11.28" textLength="60.0" lengthAdjust="spacing" font-weight="normal" fill="none" stroke="#f2efe9" stroke-width="2.4" stroke-opacity="0.6">Newcastle</text><text transform="translate(888.0,419.0) scale(1,0.619)" font-size="11.28" textLength="60.0" lengthAdjust="spacing" font-weight="normal" fill="#707070" stroke="#707070" stroke-width="0.35">Newcastle</text>
<text transform="translate(889.0,425.5) scale(1,0.693)" font-size="11.08" textLength="60.0" lengthAdjust="spacing" font-weight="normal" fill="none" stroke="#f2efe9" stroke-width="2.4" stroke-opacity="0.6">upon Tyne</text><text transform="translate(889.0,425.5) scale(1,0.693)" font-size="11.08" textLength="60.0" lengthAdjust="spacing" font-weight="normal" fill="#707070" stroke="#707070" stroke-width="0.35">upon Tyne</text>
<text transform="translate(868.0,581.0) scale(1,0.712)" font-size="11.77" textLength="59.0" lengthAdjust="spacing" font-weight="normal" fill="none" stroke="#f2efe9" stroke-width="2.4" stroke-opacity="0.6">Stoke-on-</text><text transform="translate(868.0,581.0) scale(1,0.712)" font-size="11.77" textLength="59.0" lengthAdjust="spacing" font-weight="normal" fill="#707070" stroke="#707070" stroke-width="0.35">Stoke-on-</text>
<text transform="translate(880.0,588.0) scale(1,0.636)" font-size="13.17" textLength="35.0" lengthAdjust="spacing" font-weight="normal" fill="none" stroke="#f2efe9" stroke-width="2.4" stroke-opacity="0.6">Trent</text><text transform="translate(880.0,588.0) scale(1,0.636)" font-size="13.17" textLength="35.0" lengthAdjust="spacing" font-weight="normal" fill="#707070" stroke="#707070" stroke-width="0.35">Trent</text>
<text transform="translate(776.0,428.6) scale(1,0.549)" font-size="8.91" textLength="35.0" lengthAdjust="spacing" font-weight="normal" fill="none" stroke="#f2efe9" stroke-width="2.4" stroke-opacity="0.6">Carlisle</text><text transform="translate(776.0,428.6) scale(1,0.549)" font-size="8.91" textLength="35.0" lengthAdjust="spacing" font-weight="normal" fill="#707070" stroke="#707070" stroke-width="0.35">Carlisle</text>
<text transform="translate(785.0,492.0) scale(1,0.552)" font-size="10.12" textLength="52.0" lengthAdjust="spacing" font-weight="normal" fill="none" stroke="#f2efe9" stroke-width="2.4" stroke-opacity="0.6">Lancaster</text><text transform="translate(785.0,492.0) scale(1,0.552)" font-size="10.12" textLength="52.0" lengthAdjust="spacing" font-weight="normal" fill="#707070" stroke="#707070" stroke-width="0.35">Lancaster</text>
<text transform="translate(803.0,514.6) scale(1,0.565)" font-size="11.12" textLength="45.0" lengthAdjust="spacing" font-weight="normal" fill="none" stroke="#f2efe9" stroke-width="2.4" stroke-opacity="0.6">Preston</text><text transform="translate(803.0,514.6) scale(1,0.565)" font-size="11.12" textLength="45.0" lengthAdjust="spacing" font-weight="normal" fill="#707070" stroke="#707070" stroke-width="0.35">Preston</text>
<text transform="translate(652.0,382.5) scale(1,0.481)" font-size="10.15" textLength="46.0" lengthAdjust="spacing" font-weight="normal" fill="none" stroke="#f2efe9" stroke-width="2.4" stroke-opacity="0.6">Glasgow</text><text transform="translate(652.0,382.5) scale(1,0.481)" font-size="10.15" textLength="46.0" lengthAdjust="spacing" font-weight="normal" fill="#707070" stroke="#707070" stroke-width="0.35">Glasgow</text>
<text transform="translate(741.0,372.5) scale(1,0.501)" font-size="9.75" textLength="53.0" lengthAdjust="spacing" font-weight="normal" fill="none" stroke="#f2efe9" stroke-width="2.4" stroke-opacity="0.6">Edinburgh</text><text transform="translate(741.0,372.5) scale(1,0.501)" font-size="9.75" textLength="53.0" lengthAdjust="spacing" font-weight="normal" fill="#707070" stroke="#707070" stroke-width="0.35">Edinburgh</text>
<text transform="translate(476.0,447.0) scale(1,0.610)" font-size="11.45" textLength="41.5" lengthAdjust="spacing" font-weight="normal" fill="none" stroke="#f2efe9" stroke-width="2.4" stroke-opacity="0.6">Belfast</text><text transform="translate(476.0,447.0) scale(1,0.610)" font-size="11.45" textLength="41.5" lengthAdjust="spacing" font-weight="normal" fill="#707070" stroke="#707070" stroke-width="0.35">Belfast</text>
<text transform="translate(458.0,460.0) scale(1,0.586)" font-size="9.53" textLength="38.0" lengthAdjust="spacing" font-weight="normal" fill="none" stroke="#f2efe9" stroke-width="2.4" stroke-opacity="0.6">Lisburn</text><text transform="translate(458.0,460.0) scale(1,0.586)" font-size="9.53" textLength="38.0" lengthAdjust="spacing" font-weight="normal" fill="#707070" stroke="#707070" stroke-width="0.35">Lisburn</text>
<text transform="translate(421.0,476.0) scale(1,0.521)" font-size="10.73" textLength="35.0" lengthAdjust="spacing" font-weight="normal" fill="none" stroke="#f2efe9" stroke-width="2.4" stroke-opacity="0.6">Newry</text><text transform="translate(421.0,476.0) scale(1,0.521)" font-size="10.73" textLength="35.0" lengthAdjust="spacing" font-weight="normal" fill="#707070" stroke="#707070" stroke-width="0.35">Newry</text>
<text transform="translate(392.0,465.0) scale(1,0.560)" font-size="9.98" textLength="41.0" lengthAdjust="spacing" font-weight="normal" fill="none" stroke="#f2efe9" stroke-width="2.4" stroke-opacity="0.6">Armagh</text><text transform="translate(392.0,465.0) scale(1,0.560)" font-size="9.98" textLength="41.0" lengthAdjust="spacing" font-weight="normal" fill="#707070" stroke="#707070" stroke-width="0.35">Armagh</text>
<text transform="translate(386.0,538.5) scale(1,0.482)" font-size="14.49" textLength="49.0" lengthAdjust="spacing" font-weight="normal" fill="none" stroke="#f2efe9" stroke-width="2.4" stroke-opacity="0.6">Dublin</text><text transform="translate(386.0,538.5) scale(1,0.482)" font-size="14.49" textLength="49.0" lengthAdjust="spacing" font-weight="normal" fill="#707070" stroke="#707070" stroke-width="0.35">Dublin</text>
<text transform="translate(50.0,548.0) scale(1,0.462)" font-size="12.08" textLength="46.0" lengthAdjust="spacing" font-weight="normal" fill="none" stroke="#f2efe9" stroke-width="2.4" stroke-opacity="0.6">Galway</text><text transform="translate(50.0,548.0) scale(1,0.462)" font-size="12.08" textLength="46.0" lengthAdjust="spacing" font-weight="normal" fill="#707070" stroke="#707070" stroke-width="0.35">Galway</text>
<text transform="translate(35.0,607.0) scale(1,0.548)" font-size="12.75" textLength="57.0" lengthAdjust="spacing" font-weight="normal" fill="none" stroke="#f2efe9" stroke-width="2.4" stroke-opacity="0.6">Limerick</text><text transform="translate(35.0,607.0) scale(1,0.548)" font-size="12.75" textLength="57.0" lengthAdjust="spacing" font-weight="normal" fill="#707070" stroke="#707070" stroke-width="0.35">Limerick</text>
<text transform="translate(338.0,427.0) scale(1,0.519)" font-size="9.42" textLength="66.0" lengthAdjust="spacing" font-weight="normal" fill="none" stroke="#f2efe9" stroke-width="2.4" stroke-opacity="0.6">Londonderry/</text><text transform="translate(338.0,427.0) scale(1,0.519)" font-size="9.42" textLength="66.0" lengthAdjust="spacing" font-weight="normal" fill="#707070" stroke="#707070" stroke-width="0.35">Londonderry/</text>
<text transform="translate(360.0,433.0) scale(1,0.555)" font-size="8.80" textLength="25.0" lengthAdjust="spacing" font-weight="normal" fill="none" stroke="#f2efe9" stroke-width="2.4" stroke-opacity="0.6">Derry</text><text transform="translate(360.0,433.0) scale(1,0.555)" font-size="8.80" textLength="25.0" lengthAdjust="spacing" font-weight="normal" fill="#707070" stroke="#707070" stroke-width="0.35">Derry</text>
<text transform="translate(741.0,349.0) scale(1,0.506)" font-size="8.28" textLength="23.0" lengthAdjust="spacing" font-weight="normal" fill="none" stroke="#f2efe9" stroke-width="2.4" stroke-opacity="0.6">Perth</text><text transform="translate(741.0,349.0) scale(1,0.506)" font-size="8.28" textLength="23.0" lengthAdjust="spacing" font-weight="normal" fill="#707070" stroke="#707070" stroke-width="0.35">Perth</text>
<text transform="translate(824.0,683.0) scale(1,0.841)" font-size="9.97" textLength="13.0" lengthAdjust="spacing" font-weight="normal" fill="none" stroke="#f2efe9" stroke-width="2.4" stroke-opacity="0.6">rd</text><text transform="translate(824.0,683.0) scale(1,0.841)" font-size="9.97" textLength="13.0" lengthAdjust="spacing" font-weight="normal" fill="#707070" stroke="#707070" stroke-width="0.35">rd</text>
<text transform="translate(767.0,348.0) scale(1,0.506)" font-size="8.28" textLength="33.0" lengthAdjust="spacing" font-weight="normal" fill="none" stroke="#f2efe9" stroke-width="2.4" stroke-opacity="0.6">Dundee</text><text transform="translate(767.0,348.0) scale(1,0.506)" font-size="8.28" textLength="33.0" lengthAdjust="spacing" font-weight="normal" fill="#707070" stroke="#707070" stroke-width="0.35">Dundee</text>
<text transform="translate(671.0,310.0) scale(1,0.575)" font-size="7.29" textLength="37.0" lengthAdjust="spacing" font-weight="normal" fill="none" stroke="#f2efe9" stroke-width="2.4" stroke-opacity="0.6">Inverness</text><text transform="translate(671.0,310.0) scale(1,0.575)" font-size="7.29" textLength="37.0" lengthAdjust="spacing" font-weight="normal" fill="#707070" stroke="#707070" stroke-width="0.35">Inverness</text>
<text transform="translate(830.0,323.0) scale(1,0.568)" font-size="7.38" textLength="37.0" lengthAdjust="spacing" font-weight="normal" fill="none" stroke="#f2efe9" stroke-width="2.4" stroke-opacity="0.6">Aberdeen</text><text transform="translate(830.0,323.0) scale(1,0.568)" font-size="7.38" textLength="37.0" lengthAdjust="spacing" font-weight="normal" fill="#707070" stroke="#707070" stroke-width="0.35">Aberdeen</text>
</g>
<g font-family="Liberation Sans" fill="#a584ae" filter="url(#lblur)">
<text transform="translate(142,535.4) scale(1,0.62) skewX(-12)" font-size="13" textLength="110" lengthAdjust="spacing" font-weight="bold">Éire / Ireland</text>
<text transform="translate(585,478) scale(1,0.45)" font-size="11" textLength="83" lengthAdjust="spacing" font-weight="bold">Isle of Man</text>
<text transform="translate(411,447) scale(1,0.55)" font-size="7.5" textLength="48" lengthAdjust="spacing" font-style="italic">Northern</text>
<text transform="translate(419,453) scale(1,0.55)" font-size="7.5" textLength="33" lengthAdjust="spacing" font-style="italic">Ireland</text>
</g>
<text transform="translate(1494,884) scale(1,0.75)" font-family="Liberation Sans" font-size="19" font-style="italic" fill="#6f9fd0" opacity="0.85">Str</text>
<g stroke="#6a6a6a" stroke-width="1.1" fill="#f2efe9">
<ellipse cx="870.8" cy="762.4" rx="2.6" ry="1.9"/>
<ellipse cx="868" cy="802.4" rx="2.6" ry="1.9"/>
<ellipse cx="1019.6" cy="826" rx="2.6" ry="1.9"/>
<ellipse cx="1102.5" cy="827" rx="2.6" ry="1.9"/>
<ellipse cx="1098" cy="856" rx="2.6" ry="1.9"/>
<ellipse cx="1164" cy="875" rx="2.6" ry="1.9"/>
<ellipse cx="1210.5" cy="719" rx="2.6" ry="1.9"/>
<ellipse cx="1335.8" cy="721.4" rx="2.6" ry="1.9"/>
<ellipse cx="1486" cy="789" rx="2.6" ry="1.9"/>
<ellipse cx="1334" cy="872.4" rx="2.6" ry="1.9"/>
<ellipse cx="911" cy="660.5" rx="2.6" ry="1.9"/>
<ellipse cx="916.5" cy="703" rx="2.6" ry="1.9"/>
<ellipse cx="1070" cy="718" rx="2.6" ry="1.9"/>
<ellipse cx="947.5" cy="628" rx="2.6" ry="1.9"/>
<ellipse cx="952" cy="606" rx="2.6" ry="1.9"/>
<ellipse cx="1044" cy="611" rx="2.6" ry="1.9"/>
<ellipse cx="1003" cy="636" rx="2.6" ry="1.9"/>
<ellipse cx="843" cy="679" rx="2.6" ry="1.9"/>
<ellipse cx="1165.7" cy="617.7" rx="2.6" ry="1.9"/>
<ellipse cx="1245" cy="636.8" rx="2.6" ry="1.9"/>
<ellipse cx="1242" cy="660" rx="2.6" ry="1.9"/>
<ellipse cx="1365" cy="611" rx="2.6" ry="1.9"/>
<ellipse cx="715" cy="892" rx="2.6" ry="1.9"/>
</g>
<ellipse cx="1262" cy="753.8" rx="5" ry="3.8" stroke="#555" stroke-width="1.4" fill="none"/>
<ellipse cx="1262" cy="753.8" rx="1.8" ry="1.4" fill="#555"/>
<rect x="1390" y="913" width="129" height="23" fill="#ffffff" opacity="0.85"/>
<text x="1395" y="931" font-family="Liberation Sans" font-size="14" fill="#0078a8" text-decoration="underline">© OpenStreetMap</text>
</svg>
</div>
<!-- Chrome UI -->
<div id="frame"></div>
<div id="toolbar"></div>
<div id="tbline"></div>
<div id="wline"></div>
<svg class="abs" style="left:0;top:0" width="1519" height="98">
<path d="M0,51 Q8,51 8,43 L8,17 Q8,9 16,9 L299,9 Q307,9 307,17 L307,43 Q307,51 315,51 Z" fill="#35363a"/>
<rect x="22" y="21" width="20" height="19" rx="2" fill="#222326"/>
<g fill="none" stroke="#61dafb" stroke-width="1.3">
<ellipse cx="32" cy="30.5" rx="8.5" ry="3.3"/>
<ellipse cx="32" cy="30.5" rx="8.5" ry="3.3" transform="rotate(60 32 30.5)"/>
<ellipse cx="32" cy="30.5" rx="8.5" ry="3.3" transform="rotate(120 32 30.5)"/>
</g>
<circle cx="32" cy="30.5" r="1.7" fill="#61dafb"/>
<g stroke="#e8eaed" stroke-width="1.6" stroke-linecap="round">
<path d="M282.5,26.5 L291.5,35.5 M291.5,26.5 L282.5,35.5"/>
<path d="M334,24 L334,38 M327,31 L341,31" stroke-width="1.9" stroke="#c5c8cb"/>
</g>
<g stroke="#a9abad" stroke-width="1.1" fill="none">
<path d="M1372,17.5 L1385,17.5"/>
<rect x="1428.5" y="11.5" width="12.5" height="12.5"/>
<path d="M1485,11 L1498,24 M1498,11 L1485,24"/>
</g>
<g stroke="#8a8c8f" stroke-width="1.8" fill="none" stroke-linecap="butt">
<path d="M32.5,74 L17.5,74 M24.3,66.5 L16.8,74 L24.3,81.5"/>
<path d="M56.5,74 L71.5,74 M64.7,66.5 L72.2,74 L64.7,81.5"/>
</g>
<g stroke="#eceef0" stroke-width="1.9" fill="none">
<path d="M111.2,69.8 A7.5,7.5 0 1 0 112,78"/>
</g>
<path d="M113.5,66.5 L113.5,73.5 L106.5,73.5 Z" fill="#eceef0"/>
<path d="M137.5,74.5 L144.4,67.5 L151.3,74.5 M139.5,72.5 L139.5,81.5 L149.3,81.5 L149.3,72.5" stroke="#eceef0" stroke-width="2" fill="none" stroke-linejoin="miter"/>
<circle cx="194.4" cy="74.4" r="7.3" stroke="#eceef0" stroke-width="1.7" fill="none"/>
<rect x="193.5" y="72.5" width="1.9" height="5.5" fill="#eceef0"/>
<rect x="193.5" y="69.6" width="1.9" height="1.9" fill="#eceef0"/>
<path d="M1043,65.5 L1045.3,71.6 L1051.8,71.8 L1046.7,75.8 L1048.5,82 L1043,78.4 L1037.5,82 L1039.3,75.8 L1034.2,71.8 L1040.7,71.6 Z" stroke="#e3e5e8" stroke-width="1.6" fill="none" stroke-linejoin="round"/>
<!-- bitly -->
<path d="M1085.3,78 A9,9 0 1 1 1092.2,83.4" stroke="#ee6123" stroke-width="2" fill="none"/>
<path d="M1090.3,69.5 L1090.3,79.5" stroke="#ee6123" stroke-width="2"/>
<circle cx="1094" cy="76.5" r="3.2" stroke="#ee6123" stroke-width="2" fill="none"/>
<!-- @ ext -->
<path d="M1127,64.7 L1139,66.5 L1139,83.5 L1127,82.5 Z" fill="#18191b"/>
<text x="1130" y="80" font-family="Liberation Sans" font-size="9" fill="#c8c8c8">@</text>
<!-- OFF ext -->
<path d="M1164,76 A9.5,9.5 0 0 1 1183,76 Z" fill="#5f6062"/>
<path d="M1167,73 L1172,68 M1175,74 L1180,69" stroke="#f0f0f0" stroke-width="1.6"/>
<path d="M1169,73 L1173,69" stroke="#111" stroke-width="1.2"/>
<rect x="1160" y="77" width="27" height="15" rx="1.5" fill="#616264"/>
<text x="1162.5" y="89.5" font-family="Liberation Sans" font-size="12" fill="#f4f4f4" textLength="22" lengthAdjust="spacingAndGlyphs">OFF</text>
<!-- eye -->
<path d="M1203,74.5 Q1213,66 1223.5,74.5 Q1213,83 1203,74.5 Z" fill="#424346"/>
<circle cx="1213.5" cy="74.5" r="3.2" fill="#8a4fc9"/>
<!-- rabbit -->
<rect x="1243" y="64" width="21" height="21" fill="#2056c8"/>
<ellipse cx="1254" cy="78" rx="6" ry="4.5" fill="#f5f5f5"/>
<path d="M1251,73 L1250,66 M1256,73 L1257,66" stroke="#f5f5f5" stroke-width="1.6"/>
<rect x="1244" y="75" width="6" height="4" fill="#f5f5f5"/>
<!-- folder 3d -->
<rect x="1284" y="64.5" width="20" height="4" rx="1" fill="#8fb0f0"/>
<rect x="1283.5" y="67" width="21" height="17" rx="1.5" fill="#3d6fdc"/>
<rect x="1291" y="77" width="20.5" height="15" rx="2" fill="#8ddcc0"/>
<text x="1293" y="89.5" font-family="Liberation Sans" font-size="12.5" fill="#ffffff">3d</text>
<!-- camera -->
<path d="M1324,71 Q1324,69 1326,69 L1329.5,69 L1331,66.5 L1335.5,66.5 L1337,69 L1340.5,69 Q1342.5,69 1342.5,71 L1342.5,80.5 Q1342.5,82.5 1340.5,82.5 L1326,82.5 Q1324,82.5 1324,80.5 Z" fill="#a0a1a3"/>
<circle cx="1333.3" cy="75.5" r="3.6" fill="#35363a"/>
<circle cx="1333.3" cy="75.5" r="2.2" fill="#a0a1a3"/>
<!-- BI 332 -->
<rect x="1365" y="66" width="17" height="12" rx="1.5" fill="#1a9be0"/>
<text x="1368" y="77" font-family="Liberation Sans" font-weight="bold" font-size="8" fill="#fff">BI</text>
<rect x="1360" y="77" width="27" height="15" rx="2" fill="#52b82e"/>
<text x="1362" y="89.5" font-family="Liberation Sans" font-size="12.5" fill="#ffffff">332</text>
<!-- puzzle -->
<path d="M1404,70 L1409,70 Q1409,66 1412,66 Q1415,66 1415,70 L1419.5,70 L1419.5,74 Q1423,74 1423,77 Q1423,80 1419.5,80 L1419.5,83 L1415,83 Q1415,79.5 1412,79.5 Q1409,79.5 1409,83 L1404,83 L1404,78.5 Q1407,78.5 1407,76 Q1407,73.5 1404,73.5 Z" fill="#eceef0"/>
<!-- avatar -->
<circle cx="1453.5" cy="74.3" r="14" fill="#1d1f3a"/>
<ellipse cx="1451" cy="76" rx="11" ry="9" fill="#e6e8f0"/>
<ellipse cx="1450" cy="73" rx="9" ry="4" fill="#20204a"/>
<path d="M1462,68 Q1468,74 1463,82" stroke="#6a6ea0" stroke-width="2" fill="none"/>
<!-- kebab -->
<circle cx="1493" cy="68" r="1.8" fill="#eceef0"/>
<circle cx="1493" cy="74.5" r="1.8" fill="#eceef0"/>
<circle cx="1493" cy="81" r="1.8" fill="#eceef0"/>
</svg>
<div id="omni"></div>
<svg class="abs" style="left:0;top:0" width="1519" height="98">
<circle cx="194.4" cy="74.4" r="7.3" stroke="#eceef0" stroke-width="1.7" fill="none"/>
<rect x="193.5" y="72.5" width="1.9" height="5.5" fill="#eceef0"/>
<rect x="193.5" y="69.6" width="1.9" height="1.9" fill="#eceef0"/>
<path d="M1043,65.5 L1045.3,71.6 L1051.8,71.8 L1046.7,75.8 L1048.5,82 L1043,78.4 L1037.5,82 L1039.3,75.8 L1034.2,71.8 L1040.7,71.6 Z" stroke="#e3e5e8" stroke-width="1.6" fill="none" stroke-linejoin="round"/>
</svg>
<div class="abs" style="left:53px;top:22px;font-size:15px;color:#e8eaed;">React App</div>
<div class="abs" style="left:215px;top:65px;font-size:17px;color:#e8eaed;">localhost<span style="color:#9aa0a6">:3000</span></div>

<!-- Terminal -->
<div id="term">
 <div id="ttitle"></div>
 <div id="ttab"></div>
 <div class="abs" style="left:57px;top:17px;font-size:15px;color:#fff;">Ubuntu</div>
 <svg class="abs" style="left:0;top:0" width="717" height="45">
  <g transform="translate(-106,-541)">
  <ellipse cx="141" cy="565" rx="5" ry="9" fill="#111"/>
  <ellipse cx="141" cy="568" rx="4.2" ry="5.8" fill="#f4f4f4"/>
  <circle cx="139.7" cy="559.4" r="1.15" fill="#f0f0f0"/>
  <circle cx="142.4" cy="559.4" r="1.15" fill="#f0f0f0"/>
  <path d="M139.2,561 L142.8,561 L141,563 Z" fill="#e8a80c"/>
  <path d="M132.7,572.5 Q135,568.5 139,572 L139.5,575.5 Q136,577 132.7,575 Z" fill="#e8a80c"/>
  <path d="M149.4,572.5 Q147,568.5 143,572 L142.5,575.5 Q146,577 149.4,575 Z" fill="#e8a80c"/>
  <g stroke="#c4c4c4" stroke-width="1.1" fill="none">
   <path d="M389.5,561 L400.5,572 M400.5,561 L389.5,572"/>
   <path d="M437.5,558 L437.5,573 M430,565.5 L445,565.5"/>
   <path d="M471,562.5 L478,569.5 L485,562.5"/>
  </g>
  <g stroke="#ffffff" stroke-width="1.3" fill="none">
   <path d="M672,562.6 L685,562.6"/>
   <rect x="730.6" y="556.6" width="12" height="12"/>
   <path d="M787.8,555.8 L801,569 M801,555.8 L787.8,569"/>
  </g>
  </g>
 </svg>
 <div class="abs" style="left:712px;top:86px;width:3px;height:234px;background:#9a9a9a;border-radius:2px;"></div>
 <div class="tl" style="top:81px">You can now view <span class="b">my-app</span> in the browser.</div>
 <div class="tl" style="top:129px">  <span class="b">Local:</span>            http://localhost:<span class="b">3000</span></div>
 <div class="tl" style="top:153px">  <span class="b">On Your Network:</span>  http://172.27.179.31:<span class="b">3000</span></div>
 <div class="tl" style="top:201px">Note that the development build is not optimized.</div>
 <div class="tl" style="top:225px">To create a production build, use <span style="color:#3b8eea">yarn build</span>.</div>
 <div class="abs" style="left:11px;top:271px;width:2px;height:23px;background:#ccc;"></div>
</div>

</body></html>
